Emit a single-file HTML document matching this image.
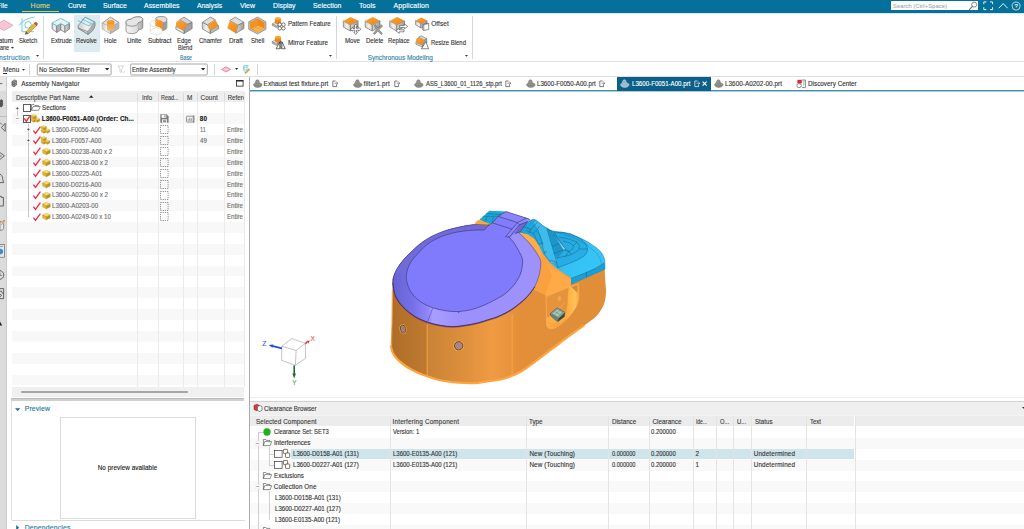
<!DOCTYPE html>
<html><head><meta charset="utf-8"><title>NX</title>
<style>
html,body{margin:0;padding:0;}
body{width:1024px;height:529px;overflow:hidden;background:#fff;position:relative;font-family:"Liberation Sans",sans-serif;}
#r{position:absolute;left:0;top:0;width:1024px;height:529px;overflow:hidden;}
#r div,#r span,#r svg{position:absolute;}
#r span{white-space:nowrap;-webkit-text-stroke:0.12px currentColor;}
#r svg{overflow:visible;}
</style></head><body><div id="r">
<div style="left:0px;top:0px;width:1024px;height:12.6px;background:#05719b;"></div>
<span style="left:-2.60px;top:1.19px;font-size:7px;line-height:9.00px;color:#ffffff;letter-spacing:0.000px;transform:scaleX(0.9309);transform-origin:0 0;">File</span>
<span style="left:30.60px;top:1.19px;font-size:7px;line-height:9.00px;color:#e9cf62;letter-spacing:0.242px;">Home</span>
<div style="left:21.9px;top:10.7px;width:36.9px;height:1.1px;background:#e6c84e;"></div>
<span style="left:67.50px;top:1.19px;font-size:7px;line-height:9.00px;color:#ffffff;letter-spacing:0.000px;transform:scaleX(0.9586);transform-origin:0 0;">Curve</span>
<span style="left:102.75px;top:1.19px;font-size:7px;line-height:9.00px;color:#ffffff;letter-spacing:0.000px;transform:scaleX(0.9845);transform-origin:0 0;">Surface</span>
<span style="left:144.25px;top:1.19px;font-size:7px;line-height:9.00px;color:#ffffff;letter-spacing:0.000px;transform:scaleX(0.9919);transform-origin:0 0;">Assemblies</span>
<span style="left:197.25px;top:1.19px;font-size:7px;line-height:9.00px;color:#ffffff;letter-spacing:0.000px;transform:scaleX(0.9687);transform-origin:0 0;">Analysis</span>
<span style="left:239.75px;top:1.19px;font-size:7px;line-height:9.00px;color:#ffffff;letter-spacing:0.000px;transform:scaleX(0.9969);transform-origin:0 0;">View</span>
<span style="left:272.50px;top:1.19px;font-size:7px;line-height:9.00px;color:#ffffff;letter-spacing:0.000px;transform:scaleX(0.9803);transform-origin:0 0;">Display</span>
<span style="left:312.90px;top:1.19px;font-size:7px;line-height:9.00px;color:#ffffff;letter-spacing:0.000px;transform:scaleX(0.9845);transform-origin:0 0;">Selection</span>
<span style="left:359.00px;top:1.19px;font-size:7px;line-height:9.00px;color:#ffffff;letter-spacing:0.065px;">Tools</span>
<span style="left:393.50px;top:1.19px;font-size:7px;line-height:9.00px;color:#ffffff;letter-spacing:0.125px;">Application</span>
<div style="left:891.2px;top:0.8px;width:87px;height:9.7px;background:#fff;border-radius:0.5px;"></div>
<span style="left:893.00px;top:2.11px;font-size:5.8px;line-height:8.00px;color:#a9adb0;letter-spacing:0.066px;">Search (Ctrl+Space)</span>
<svg style="left:968px;top:1px;" width="10" height="10" viewBox="0 0 10 10"><circle cx="6.2" cy="3.6" r="2.5" fill="none" stroke="#777" stroke-width="0.9"/><path d="M4.4 5.4 L1.6 8.4" stroke="#777" stroke-width="1.3" stroke-linecap="round"/></svg>
<svg style="left:983px;top:1px;" width="12" height="10" viewBox="0 0 12 10"><path d="M0.8 3.2V0.9H3.4M7 0.9H9.6V3.2M9.6 6.2V8.6H7M3.4 8.6H0.8V6.2" fill="none" stroke="#fff" stroke-width="0.9"/></svg>
<svg style="left:997.5px;top:1px;" width="11" height="10" viewBox="0 0 11 10"><path d="M0.8 7.2L5.2 2.6L9.6 7.2" fill="none" stroke="#fff" stroke-width="0.9"/></svg>
<svg style="left:1011px;top:0.5px;" width="11" height="11" viewBox="0 0 11 11"><circle cx="5.1" cy="5.1" r="4" fill="none" stroke="#fff" stroke-width="0.7"/></svg>
<span style="left:1014.40px;top:1.97px;font-size:6.2px;line-height:8.00px;color:#ffffff;letter-spacing:0.000px;">?</span>
<div style="left:0px;top:12.6px;width:1024px;height:49px;background:#fff;"></div>
<div style="left:0px;top:61.4px;width:1024px;height:0.9px;background:#e0e0e0;"></div>
<div style="left:0px;top:12.6px;width:1024px;height:1px;background:#d9e8ef;"></div>
<div style="left:74px;top:15.2px;width:26px;height:37px;background:#dcebf0;"></div>
<div style="left:43.3px;top:15.8px;width:0.8px;height:43px;background:#d6d6d6;"></div>
<div style="left:336px;top:15.8px;width:0.8px;height:43px;background:#d6d6d6;"></div>
<div style="left:471.6px;top:15.8px;width:0.8px;height:43px;background:#d6d6d6;"></div>
<span style="left:50.75px;top:36.90px;font-size:6.4px;line-height:8.00px;color:#333;letter-spacing:0.000px;transform:scaleX(0.9521);transform-origin:0 0;">Extrude</span>
<span style="left:76.25px;top:36.90px;font-size:6.4px;line-height:8.00px;color:#333;letter-spacing:0.000px;transform:scaleX(0.8974);transform-origin:0 0;">Revolve</span>
<span style="left:104.25px;top:36.90px;font-size:6.4px;line-height:8.00px;color:#333;letter-spacing:0.000px;transform:scaleX(0.9686);transform-origin:0 0;">Hole</span>
<span style="left:127.00px;top:36.90px;font-size:6.4px;line-height:8.00px;color:#333;letter-spacing:0.000px;transform:scaleX(0.9705);transform-origin:0 0;">Unite</span>
<span style="left:147.50px;top:36.90px;font-size:6.4px;line-height:8.00px;color:#333;letter-spacing:0.000px;transform:scaleX(0.9859);transform-origin:0 0;">Subtract</span>
<span style="left:176.75px;top:36.90px;font-size:6.4px;line-height:8.00px;color:#333;letter-spacing:0.000px;transform:scaleX(0.9366);transform-origin:0 0;">Edge</span>
<span style="left:177.50px;top:43.90px;font-size:6.4px;line-height:8.00px;color:#333;letter-spacing:0.000px;transform:scaleX(0.8705);transform-origin:0 0;">Blend</span>
<span style="left:199.25px;top:36.90px;font-size:6.4px;line-height:8.00px;color:#333;letter-spacing:0.000px;transform:scaleX(0.9372);transform-origin:0 0;">Chamfer</span>
<span style="left:228.75px;top:36.90px;font-size:6.4px;line-height:8.00px;color:#333;letter-spacing:0.000px;transform:scaleX(0.9914);transform-origin:0 0;">Draft</span>
<span style="left:250.60px;top:36.90px;font-size:6.4px;line-height:8.00px;color:#333;letter-spacing:0.000px;transform:scaleX(0.9415);transform-origin:0 0;">Shell</span>
<span style="left:18.75px;top:36.90px;font-size:6.4px;line-height:8.00px;color:#333;letter-spacing:0.000px;transform:scaleX(0.9327);transform-origin:0 0;">Sketch</span>
<span style="left:-6.00px;top:36.90px;font-size:6.4px;line-height:8.00px;color:#333;letter-spacing:0.037px;">Datum</span>
<span style="left:-4.60px;top:43.90px;font-size:6.4px;line-height:8.00px;color:#333;letter-spacing:0.000px;transform:scaleX(0.8675);transform-origin:0 0;">Plane</span>
<svg style="left:10.6px;top:46.5px;" width="4" height="3" viewBox="0 0 4 3"><path d="M0 0H3L1.5 1.8Z" fill="#333"/></svg>
<span style="left:-9.50px;top:53.90px;font-size:6.4px;line-height:8.00px;color:#2b80a8;letter-spacing:0.279px;">Construction</span>
<svg style="left:36px;top:55px;" width="4" height="3" viewBox="0 0 4 3"><path d="M0 0H3L1.5 1.8Z" fill="#333"/></svg>
<span style="left:180.00px;top:53.90px;font-size:6.4px;line-height:8.00px;color:#2b80a8;letter-spacing:0.000px;transform:scaleX(0.8226);transform-origin:0 0;">Base</span>
<svg style="left:329.3px;top:55px;" width="4" height="3" viewBox="0 0 4 3"><path d="M0 0H3L1.5 1.8Z" fill="#333"/></svg>
<span style="left:287.90px;top:19.90px;font-size:6.4px;line-height:8.00px;color:#333;letter-spacing:0.000px;transform:scaleX(0.9602);transform-origin:0 0;">Pattern Feature</span>
<span style="left:287.90px;top:38.90px;font-size:6.4px;line-height:8.00px;color:#333;letter-spacing:0.000px;transform:scaleX(0.9891);transform-origin:0 0;">Mirror Feature</span>
<span style="left:344.75px;top:36.90px;font-size:6.4px;line-height:8.00px;color:#333;letter-spacing:0.000px;transform:scaleX(0.9584);transform-origin:0 0;">Move</span>
<span style="left:365.60px;top:36.90px;font-size:6.4px;line-height:8.00px;color:#333;letter-spacing:0.000px;transform:scaleX(0.9459);transform-origin:0 0;">Delete</span>
<span style="left:388.10px;top:36.90px;font-size:6.4px;line-height:8.00px;color:#333;letter-spacing:0.000px;transform:scaleX(0.9220);transform-origin:0 0;">Replace</span>
<span style="left:431.25px;top:19.90px;font-size:6.4px;line-height:8.00px;color:#333;letter-spacing:0.109px;">Offset</span>
<span style="left:431.25px;top:38.90px;font-size:6.4px;line-height:8.00px;color:#333;letter-spacing:0.000px;transform:scaleX(0.9281);transform-origin:0 0;">Resize Blend</span>
<span style="left:367.75px;top:53.90px;font-size:6.4px;line-height:8.00px;color:#2b80a8;letter-spacing:0.007px;">Synchronous Modeling</span>
<svg style="left:464.6px;top:55px;" width="4" height="3" viewBox="0 0 4 3"><path d="M0 0H3L1.5 1.8Z" fill="#333"/></svg>
<div style="left:0px;top:62.3px;width:1024px;height:14px;background:#fff;"></div>
<div style="left:0px;top:76px;width:1024px;height:0.9px;background:#dedede;"></div>
<span style="left:3.00px;top:65.90px;font-size:6.4px;line-height:8.00px;color:#333;letter-spacing:0.097px;">Menu</span>
<div style="left:3px;top:72.6px;width:4.2px;height:0.6px;background:#333;"></div>
<svg style="left:22px;top:68.5px;" width="4" height="3" viewBox="0 0 4 3"><path d="M0 0H3L1.5 1.8Z" fill="#333"/></svg>
<div style="left:29.3px;top:64px;width:0.7px;height:11px;background:#d6d6d6;"></div>
<svg style="left:36px;top:63px;" width="77" height="13" viewBox="36 63 77 13"><rect x="37.3" y="64" width="73.8" height="11" rx="0.8" fill="#fff" stroke="#9c9c9c" stroke-width="0.9"/></svg>
<span style="left:38.70px;top:65.90px;font-size:6.4px;line-height:8.00px;color:#333;letter-spacing:0.000px;transform:scaleX(0.9715);transform-origin:0 0;">No Selection Filter</span>
<svg style="left:104.5px;top:68.3px;" width="5" height="3" viewBox="0 0 5 3"><path d="M0 0H4.2L2.1 2.4Z" fill="#222"/></svg>
<svg style="left:116.5px;top:65px;" width="10" height="10" viewBox="0 0 10 10"><path d="M1 1H6.5L4.6 4V7.2H3V4Z" fill="none" stroke="#c4c4c4" stroke-width="0.7"/><path d="M6 7.5Q8 7.8 7.6 6" fill="none" stroke="#c4c4c4" stroke-width="0.6"/></svg>
<svg style="left:129px;top:63px;" width="80" height="13" viewBox="129 63 80 13"><rect x="130.7" y="64" width="76.6" height="11" rx="0.8" fill="#fff" stroke="#9c9c9c" stroke-width="0.9"/></svg>
<span style="left:131.60px;top:65.90px;font-size:6.4px;line-height:8.00px;color:#333;letter-spacing:0.000px;transform:scaleX(0.9524);transform-origin:0 0;">Entire Assembly</span>
<svg style="left:201.3px;top:68.3px;" width="5" height="3" viewBox="0 0 5 3"><path d="M0 0H4.2L2.1 2.4Z" fill="#222"/></svg>
<div style="left:214px;top:64px;width:0.7px;height:11px;background:#d6d6d6;"></div>
<svg style="left:220.5px;top:66px;" width="11" height="7" viewBox="0 0 11 7"><path d="M0.6 3.4L5 0.8L9.6 3.4L5 6Z" fill="#f8c8d6" stroke="#e0608a" stroke-width="0.7"/></svg>
<svg style="left:234.8px;top:68.3px;" width="4" height="3" viewBox="0 0 4 3"><path d="M0 0H3.2L1.6 1.9Z" fill="#333"/></svg>
<div style="left:257.3px;top:64px;width:0.7px;height:11px;background:#d6d6d6;"></div>
<div style="left:0px;top:76.9px;width:6.9px;height:452.1px;background:#dbdbdb;"></div>
<div style="left:6.2px;top:76.9px;width:0.8px;height:452.1px;background:#cdcdcd;"></div>
<div style="left:7px;top:76.9px;width:4.5px;height:452.1px;background:#fff;"></div>
<div style="left:0px;top:76.9px;width:6.2px;height:14.5px;background:#e8e8e8;"></div>
<div style="left:0px;top:116px;width:7.2px;height:0.6px;background:#bdbdbd;"></div>
<div style="left:11.5px;top:76.9px;width:233.3px;height:452.1px;background:#fff;"></div>
<div style="left:244.6px;top:76.9px;width:0.7px;height:452.1px;background:#d8d8d8;"></div>
<div style="left:245.3px;top:76.9px;width:4px;height:452.1px;background:#fff;"></div>
<div style="left:249.3px;top:76.9px;width:0.9px;height:452.1px;background:#ababab;"></div>
<span style="left:21.20px;top:79.90px;font-size:6.4px;line-height:8.00px;color:#333;letter-spacing:0.088px;">Assembly Navigator</span>
<svg style="left:236px;top:80.3px;" width="8" height="7" viewBox="0 0 8 7"><rect x="0.5" y="0.5" width="6.6" height="5.6" fill="#fff" stroke="#222" stroke-width="0.8"/><rect x="0.5" y="0.3" width="6.6" height="1.2" fill="#222"/></svg>
<div style="left:12.1px;top:91.4px;width:231.8px;height:10.8px;background:#eeeeee;"></div>
<span style="left:15.70px;top:93.90px;font-size:6.4px;line-height:8.00px;color:#444;letter-spacing:0.000px;transform:scaleX(0.9934);transform-origin:0 0;">Descriptive Part Name</span>
<svg style="left:88.8px;top:95.2px;" width="5" height="4" viewBox="0 0 5 4"><path d="M0 2.8L2.2 0.2L4.4 2.8Z" fill="#222"/></svg>
<span style="left:141.50px;top:93.90px;font-size:6.4px;line-height:8.00px;color:#444;letter-spacing:0.000px;transform:scaleX(0.9461);transform-origin:0 0;">Info</span>
<span style="left:161.00px;top:93.90px;font-size:6.4px;line-height:8.00px;color:#444;letter-spacing:0.000px;transform:scaleX(0.8481);transform-origin:0 0;">Read...</span>
<span style="left:187.00px;top:93.90px;font-size:6.4px;line-height:8.00px;color:#444;letter-spacing:0.268px;">M</span>
<span style="left:200.50px;top:93.90px;font-size:6.4px;line-height:8.00px;color:#444;letter-spacing:0.055px;">Count</span>
<div style="left:227.5px;top:91.6px;width:16.4px;height:10.6px;overflow:hidden;"><span style="left:0;top:2.1px;font-size:6.4px;line-height:8.3px;color:#444;letter-spacing:-0.05px;">Reference Set</span></div>
<div style="left:12.1px;top:102.1px;width:231.8px;height:10.9px;background:#fff;"></div>
<div style="left:12.1px;top:113.0px;width:231.8px;height:10.9px;background:#f8f8f8;"></div>
<div style="left:12.1px;top:123.89999999999999px;width:231.8px;height:10.9px;background:#fff;"></div>
<div style="left:12.1px;top:134.8px;width:231.8px;height:10.9px;background:#f8f8f8;"></div>
<div style="left:12.1px;top:145.7px;width:231.8px;height:10.9px;background:#fff;"></div>
<div style="left:12.1px;top:156.6px;width:231.8px;height:10.9px;background:#f8f8f8;"></div>
<div style="left:12.1px;top:167.5px;width:231.8px;height:10.9px;background:#fff;"></div>
<div style="left:12.1px;top:178.39999999999998px;width:231.8px;height:10.9px;background:#f8f8f8;"></div>
<div style="left:12.1px;top:189.3px;width:231.8px;height:10.9px;background:#fff;"></div>
<div style="left:12.1px;top:200.2px;width:231.8px;height:10.9px;background:#f8f8f8;"></div>
<div style="left:12.1px;top:211.1px;width:231.8px;height:10.9px;background:#fff;"></div>
<div style="left:12.1px;top:222.0px;width:231.8px;height:10.9px;background:#f8f8f8;"></div>
<div style="left:12.1px;top:232.9px;width:231.8px;height:10.9px;background:#fff;"></div>
<div style="left:12.1px;top:243.8px;width:231.8px;height:10.9px;background:#f8f8f8;"></div>
<div style="left:12.1px;top:254.7px;width:231.8px;height:10.9px;background:#fff;"></div>
<div style="left:12.1px;top:265.6px;width:231.8px;height:10.9px;background:#f8f8f8;"></div>
<div style="left:12.1px;top:276.5px;width:231.8px;height:10.9px;background:#fff;"></div>
<div style="left:12.1px;top:287.4px;width:231.8px;height:10.9px;background:#f8f8f8;"></div>
<div style="left:12.1px;top:298.3px;width:231.8px;height:10.9px;background:#fff;"></div>
<div style="left:12.1px;top:309.2px;width:231.8px;height:10.9px;background:#f8f8f8;"></div>
<div style="left:12.1px;top:320.1px;width:231.8px;height:10.9px;background:#fff;"></div>
<div style="left:12.1px;top:331.0px;width:231.8px;height:10.9px;background:#f8f8f8;"></div>
<div style="left:12.1px;top:341.9px;width:231.8px;height:10.9px;background:#fff;"></div>
<div style="left:12.1px;top:352.8px;width:231.8px;height:10.9px;background:#f8f8f8;"></div>
<div style="left:12.1px;top:363.70000000000005px;width:231.8px;height:10.9px;background:#fff;"></div>
<div style="left:12.1px;top:374.6px;width:231.8px;height:10.9px;background:#f8f8f8;"></div>
<div style="left:12.1px;top:385.5px;width:231.8px;height:1.8000000000000114px;background:#fff;"></div>
<div style="left:137.2px;top:91.6px;width:0.7px;height:295.7px;background:#ebebeb;"></div>
<div style="left:157.5px;top:91.6px;width:0.7px;height:295.7px;background:#ebebeb;"></div>
<div style="left:183.4px;top:91.6px;width:0.7px;height:295.7px;background:#ebebeb;"></div>
<div style="left:196.5px;top:91.6px;width:0.7px;height:295.7px;background:#ebebeb;"></div>
<div style="left:224.4px;top:91.6px;width:0.7px;height:295.7px;background:#ebebeb;"></div>
<div style="left:137.2px;top:93px;width:0.7px;height:8px;background:#dadada;"></div>
<div style="left:157.5px;top:93px;width:0.7px;height:8px;background:#dadada;"></div>
<div style="left:183.4px;top:93px;width:0.7px;height:8px;background:#dadada;"></div>
<div style="left:196.5px;top:93px;width:0.7px;height:8px;background:#dadada;"></div>
<div style="left:224.4px;top:93px;width:0.7px;height:8px;background:#dadada;"></div>
<div style="left:243.6px;top:91.6px;width:0.6px;height:295.7px;background:#e9e9e9;"></div>
<div style="left:12.1px;top:387.3px;width:231.8px;height:9.5px;background:#f0f0f0;"></div>
<div style="left:21.2px;top:391.2px;width:167.1px;height:1.7px;background:#a6a6a6;border-radius:0.8px;"></div>
<div style="left:11.3px;top:398px;width:233px;height:3.2px;background:#cfcfcf;"></div>
<div style="left:11.3px;top:398px;width:233px;height:0.8px;background:#bcbcbc;"></div>
<div style="left:17.3px;top:110.4px;width:0.5px;height:6px;background:#c4c4c4;"></div>
<div style="left:27.9px;top:124px;width:0.5px;height:93px;background:#c4c4c4;"></div>
<svg style="left:15px;top:105.49999999999999px;" width="5" height="5" viewBox="0 0 5 5"><rect x="0.2" y="0.2" width="4.4" height="4.4" rx="0.8" fill="#fff" stroke="#e2e2e2" stroke-width="0.4"/><path d="M1.2 2.4H3.6M2.4 1.2V3.6" stroke="#333" stroke-width="0.7"/></svg>
<div style="left:23.1px;top:103.99999999999999px;width:7.8px;height:7.8px;background:#fff;box-sizing:border-box;border:0.9px solid #5c5c5c;"></div>
<svg style="left:31.3px;top:104.39999999999999px;" width="10" height="7" viewBox="0 0 10 7"><path d="M0.5 6.3V0.6H3L3.8 1.5H7.4V2.6M0.5 6.3L2 2.6H9.2L7.6 6.3Z" fill="#fff" stroke="#444" stroke-width="0.6"/></svg>
<span style="left:41.75px;top:103.90px;font-size:6.4px;line-height:8.00px;color:#333;letter-spacing:0.000px;transform:scaleX(0.9757);transform-origin:0 0;">Sections</span>
<svg style="left:15px;top:116.39999999999999px;" width="5" height="5" viewBox="0 0 5 5"><rect x="0.2" y="0.2" width="4.4" height="4.4" rx="0.8" fill="#fff" stroke="#e2e2e2" stroke-width="0.4"/><path d="M1.1 2.4H3.7" stroke="#777" stroke-width="0.7"/></svg>
<div style="left:23.1px;top:114.89999999999999px;width:7.8px;height:7.8px;background:#fff;box-sizing:border-box;border:0.9px solid #5c5c5c;"></div>
<svg style="left:23.1px;top:114.89999999999999px;" width="8" height="8" viewBox="0 0 8 8"><path d="M1.3 3.4L3.3 6.2L6.7 1.4" fill="none" stroke="#ee2a48" stroke-width="1.4"/></svg>
<span style="left:41.75px;top:114.90px;font-size:6.4px;line-height:8.00px;color:#1a1a1a;letter-spacing:0.030px;font-weight:bold;">L3600-F0051-A00 (Order: Ch...</span>
<span style="left:199.70px;top:114.90px;font-size:6.4px;line-height:8.00px;color:#1a1a1a;letter-spacing:0.181px;font-weight:bold;">80</span>
<svg style="left:25.6px;top:127.29999999999998px;" width="5" height="5" viewBox="0 0 5 5"><rect x="0.2" y="0.2" width="4.4" height="4.4" rx="0.8" fill="#fff" stroke="#e2e2e2" stroke-width="0.4"/><path d="M1.2 2.4H3.6M2.4 1.2V3.6" stroke="#333" stroke-width="0.7"/></svg>
<svg style="left:41px;top:125.29999999999998px;" width="9" height="9" viewBox="0 0 9 9"><path d="M0.20 4.84 L2.80 6.08 V8.20 L0.20 6.96Z" fill="#e6b82c"/><path d="M2.80 6.08 L5.40 4.84 V6.96 L2.80 8.20Z" fill="#c4921a"/><path d="M2.80 3.60 L5.40 4.84 L2.80 6.08 L0.20 4.84Z" fill="#f9e066"/><path d="M2.80 3.60 L5.40 4.84 L2.80 6.08 L0.20 4.84Z M0.20 4.84 L2.80 6.08 V8.20 L0.20 6.96Z M2.80 6.08 L5.40 4.84 V6.96 L2.80 8.20Z" fill="none" stroke="#a87c10" stroke-width="0.25"/><path d="M0.20 1.64 L2.80 2.88 V5.00 L0.20 3.76Z" fill="#e6b82c"/><path d="M2.80 2.88 L5.40 1.64 V3.76 L2.80 5.00Z" fill="#c4921a"/><path d="M2.80 0.40 L5.40 1.64 L2.80 2.88 L0.20 1.64Z" fill="#f9e066"/><path d="M2.80 0.40 L5.40 1.64 L2.80 2.88 L0.20 1.64Z M0.20 1.64 L2.80 2.88 V5.00 L0.20 3.76Z M2.80 2.88 L5.40 1.64 V3.76 L2.80 5.00Z" fill="none" stroke="#a87c10" stroke-width="0.25"/><path d="M4.00 4.99 L6.40 6.18 V8.20 L4.00 7.01Z" fill="#e6b82c"/><path d="M6.40 6.18 L8.80 4.99 V7.01 L6.40 8.20Z" fill="#c4921a"/><path d="M6.40 3.80 L8.80 4.99 L6.40 6.18 L4.00 4.99Z" fill="#f9e066"/><path d="M6.40 3.80 L8.80 4.99 L6.40 6.18 L4.00 4.99Z M4.00 4.99 L6.40 6.18 V8.20 L4.00 7.01Z M6.40 6.18 L8.80 4.99 V7.01 L6.40 8.20Z" fill="none" stroke="#a87c10" stroke-width="0.25"/></svg>
<svg style="left:33.2px;top:125.49999999999999px;" width="8" height="8" viewBox="0 0 8 8"><path d="M0.4 4.6L2.5 7.4L7.4 0.6" fill="none" stroke="#ee2a48" stroke-width="1.3"/></svg>
<span style="left:52.00px;top:125.90px;font-size:6.4px;line-height:8.00px;color:#6e6e6e;letter-spacing:0.000px;transform:scaleX(0.9574);transform-origin:0 0;">L3600-F0056-A00</span>
<svg style="left:160.1px;top:125.19999999999999px;" width="9" height="9" viewBox="0 0 9 9"><rect x="0.5" y="0.5" width="7.6" height="8" fill="none" stroke="#5e5e5e" stroke-width="0.65" stroke-dasharray="1.3 0.9"/></svg>
<span style="left:227.00px;top:125.90px;font-size:6.4px;line-height:8.00px;color:#6e6e6e;letter-spacing:0.000px;transform:scaleX(0.9570);transform-origin:0 0;">Entire</span>
<svg style="left:25.6px;top:138.2px;" width="5" height="5" viewBox="0 0 5 5"><rect x="0.2" y="0.2" width="4.4" height="4.4" rx="0.8" fill="#fff" stroke="#e2e2e2" stroke-width="0.4"/><path d="M1.2 2.4H3.6M2.4 1.2V3.6" stroke="#333" stroke-width="0.7"/></svg>
<svg style="left:41px;top:136.2px;" width="9" height="9" viewBox="0 0 9 9"><path d="M0.20 4.84 L2.80 6.08 V8.20 L0.20 6.96Z" fill="#e6b82c"/><path d="M2.80 6.08 L5.40 4.84 V6.96 L2.80 8.20Z" fill="#c4921a"/><path d="M2.80 3.60 L5.40 4.84 L2.80 6.08 L0.20 4.84Z" fill="#f9e066"/><path d="M2.80 3.60 L5.40 4.84 L2.80 6.08 L0.20 4.84Z M0.20 4.84 L2.80 6.08 V8.20 L0.20 6.96Z M2.80 6.08 L5.40 4.84 V6.96 L2.80 8.20Z" fill="none" stroke="#a87c10" stroke-width="0.25"/><path d="M0.20 1.64 L2.80 2.88 V5.00 L0.20 3.76Z" fill="#e6b82c"/><path d="M2.80 2.88 L5.40 1.64 V3.76 L2.80 5.00Z" fill="#c4921a"/><path d="M2.80 0.40 L5.40 1.64 L2.80 2.88 L0.20 1.64Z" fill="#f9e066"/><path d="M2.80 0.40 L5.40 1.64 L2.80 2.88 L0.20 1.64Z M0.20 1.64 L2.80 2.88 V5.00 L0.20 3.76Z M2.80 2.88 L5.40 1.64 V3.76 L2.80 5.00Z" fill="none" stroke="#a87c10" stroke-width="0.25"/><path d="M4.00 4.99 L6.40 6.18 V8.20 L4.00 7.01Z" fill="#e6b82c"/><path d="M6.40 6.18 L8.80 4.99 V7.01 L6.40 8.20Z" fill="#c4921a"/><path d="M6.40 3.80 L8.80 4.99 L6.40 6.18 L4.00 4.99Z" fill="#f9e066"/><path d="M6.40 3.80 L8.80 4.99 L6.40 6.18 L4.00 4.99Z M4.00 4.99 L6.40 6.18 V8.20 L4.00 7.01Z M6.40 6.18 L8.80 4.99 V7.01 L6.40 8.20Z" fill="none" stroke="#a87c10" stroke-width="0.25"/></svg>
<svg style="left:33.2px;top:136.4px;" width="8" height="8" viewBox="0 0 8 8"><path d="M0.4 4.6L2.5 7.4L7.4 0.6" fill="none" stroke="#ee2a48" stroke-width="1.3"/></svg>
<span style="left:52.00px;top:136.90px;font-size:6.4px;line-height:8.00px;color:#6e6e6e;letter-spacing:0.000px;transform:scaleX(0.9574);transform-origin:0 0;">L3600-F0057-A00</span>
<svg style="left:160.1px;top:136.1px;" width="9" height="9" viewBox="0 0 9 9"><rect x="0.5" y="0.5" width="7.6" height="8" fill="none" stroke="#5e5e5e" stroke-width="0.65" stroke-dasharray="1.3 0.9"/></svg>
<span style="left:227.00px;top:136.90px;font-size:6.4px;line-height:8.00px;color:#6e6e6e;letter-spacing:0.000px;transform:scaleX(0.9570);transform-origin:0 0;">Entire</span>
<svg style="left:41.8px;top:146.89999999999998px;" width="9" height="9" viewBox="0 0 9 9"><path d="M0.60 2.98 L4.40 4.76 V7.80 L0.60 6.02Z" fill="#e6b82c"/><path d="M4.40 4.76 L8.20 2.98 V6.02 L4.40 7.80Z" fill="#c4921a"/><path d="M4.40 1.20 L8.20 2.98 L4.40 4.76 L0.60 2.98Z" fill="#f9e066"/><path d="M4.40 1.20 L8.20 2.98 L4.40 4.76 L0.60 2.98Z M0.60 2.98 L4.40 4.76 V7.80 L0.60 6.02Z M4.40 4.76 L8.20 2.98 V6.02 L4.40 7.80Z" fill="none" stroke="#a87c10" stroke-width="0.3"/></svg>
<svg style="left:33.2px;top:147.29999999999998px;" width="8" height="8" viewBox="0 0 8 8"><path d="M0.4 4.6L2.5 7.4L7.4 0.6" fill="none" stroke="#ee2a48" stroke-width="1.3"/></svg>
<span style="left:52.00px;top:147.90px;font-size:6.4px;line-height:8.00px;color:#6e6e6e;letter-spacing:0.000px;transform:scaleX(0.9629);transform-origin:0 0;">L3600-D0238-A00 x 2</span>
<svg style="left:160.1px;top:146.99999999999997px;" width="9" height="9" viewBox="0 0 9 9"><rect x="0.5" y="0.5" width="7.6" height="8" fill="none" stroke="#5e5e5e" stroke-width="0.65" stroke-dasharray="1.3 0.9"/></svg>
<span style="left:227.00px;top:147.90px;font-size:6.4px;line-height:8.00px;color:#6e6e6e;letter-spacing:0.000px;transform:scaleX(0.9570);transform-origin:0 0;">Entire</span>
<svg style="left:41.8px;top:157.79999999999998px;" width="9" height="9" viewBox="0 0 9 9"><path d="M0.60 2.98 L4.40 4.76 V7.80 L0.60 6.02Z" fill="#e6b82c"/><path d="M4.40 4.76 L8.20 2.98 V6.02 L4.40 7.80Z" fill="#c4921a"/><path d="M4.40 1.20 L8.20 2.98 L4.40 4.76 L0.60 2.98Z" fill="#f9e066"/><path d="M4.40 1.20 L8.20 2.98 L4.40 4.76 L0.60 2.98Z M0.60 2.98 L4.40 4.76 V7.80 L0.60 6.02Z M4.40 4.76 L8.20 2.98 V6.02 L4.40 7.80Z" fill="none" stroke="#a87c10" stroke-width="0.3"/></svg>
<svg style="left:33.2px;top:158.2px;" width="8" height="8" viewBox="0 0 8 8"><path d="M0.4 4.6L2.5 7.4L7.4 0.6" fill="none" stroke="#ee2a48" stroke-width="1.3"/></svg>
<span style="left:52.00px;top:158.90px;font-size:6.4px;line-height:8.00px;color:#6e6e6e;letter-spacing:0.000px;transform:scaleX(0.9655);transform-origin:0 0;">L3600-A0218-00 x 2</span>
<svg style="left:160.1px;top:157.89999999999998px;" width="9" height="9" viewBox="0 0 9 9"><rect x="0.5" y="0.5" width="7.6" height="8" fill="none" stroke="#5e5e5e" stroke-width="0.65" stroke-dasharray="1.3 0.9"/></svg>
<span style="left:227.00px;top:158.90px;font-size:6.4px;line-height:8.00px;color:#6e6e6e;letter-spacing:0.000px;transform:scaleX(0.9570);transform-origin:0 0;">Entire</span>
<svg style="left:41.8px;top:168.7px;" width="9" height="9" viewBox="0 0 9 9"><path d="M0.60 2.98 L4.40 4.76 V7.80 L0.60 6.02Z" fill="#e6b82c"/><path d="M4.40 4.76 L8.20 2.98 V6.02 L4.40 7.80Z" fill="#c4921a"/><path d="M4.40 1.20 L8.20 2.98 L4.40 4.76 L0.60 2.98Z" fill="#f9e066"/><path d="M4.40 1.20 L8.20 2.98 L4.40 4.76 L0.60 2.98Z M0.60 2.98 L4.40 4.76 V7.80 L0.60 6.02Z M4.40 4.76 L8.20 2.98 V6.02 L4.40 7.80Z" fill="none" stroke="#a87c10" stroke-width="0.3"/></svg>
<svg style="left:33.2px;top:169.1px;" width="8" height="8" viewBox="0 0 8 8"><path d="M0.4 4.6L2.5 7.4L7.4 0.6" fill="none" stroke="#ee2a48" stroke-width="1.3"/></svg>
<span style="left:52.00px;top:169.90px;font-size:6.4px;line-height:8.00px;color:#6e6e6e;letter-spacing:0.000px;transform:scaleX(0.9616);transform-origin:0 0;">L3600-D0225-A01</span>
<svg style="left:160.1px;top:168.79999999999998px;" width="9" height="9" viewBox="0 0 9 9"><rect x="0.5" y="0.5" width="7.6" height="8" fill="none" stroke="#5e5e5e" stroke-width="0.65" stroke-dasharray="1.3 0.9"/></svg>
<span style="left:227.00px;top:169.90px;font-size:6.4px;line-height:8.00px;color:#6e6e6e;letter-spacing:0.000px;transform:scaleX(0.9570);transform-origin:0 0;">Entire</span>
<svg style="left:41.8px;top:179.59999999999997px;" width="9" height="9" viewBox="0 0 9 9"><path d="M0.60 2.98 L4.40 4.76 V7.80 L0.60 6.02Z" fill="#e6b82c"/><path d="M4.40 4.76 L8.20 2.98 V6.02 L4.40 7.80Z" fill="#c4921a"/><path d="M4.40 1.20 L8.20 2.98 L4.40 4.76 L0.60 2.98Z" fill="#f9e066"/><path d="M4.40 1.20 L8.20 2.98 L4.40 4.76 L0.60 2.98Z M0.60 2.98 L4.40 4.76 V7.80 L0.60 6.02Z M4.40 4.76 L8.20 2.98 V6.02 L4.40 7.80Z" fill="none" stroke="#a87c10" stroke-width="0.3"/></svg>
<svg style="left:33.2px;top:179.99999999999997px;" width="8" height="8" viewBox="0 0 8 8"><path d="M0.4 4.6L2.5 7.4L7.4 0.6" fill="none" stroke="#ee2a48" stroke-width="1.3"/></svg>
<span style="left:52.00px;top:180.90px;font-size:6.4px;line-height:8.00px;color:#6e6e6e;letter-spacing:0.000px;transform:scaleX(0.9444);transform-origin:0 0;">L3600-D0216-A00</span>
<svg style="left:160.1px;top:179.69999999999996px;" width="9" height="9" viewBox="0 0 9 9"><rect x="0.5" y="0.5" width="7.6" height="8" fill="none" stroke="#5e5e5e" stroke-width="0.65" stroke-dasharray="1.3 0.9"/></svg>
<span style="left:227.00px;top:180.90px;font-size:6.4px;line-height:8.00px;color:#6e6e6e;letter-spacing:0.000px;transform:scaleX(0.9570);transform-origin:0 0;">Entire</span>
<svg style="left:41.8px;top:190.5px;" width="9" height="9" viewBox="0 0 9 9"><path d="M0.60 2.98 L4.40 4.76 V7.80 L0.60 6.02Z" fill="#e6b82c"/><path d="M4.40 4.76 L8.20 2.98 V6.02 L4.40 7.80Z" fill="#c4921a"/><path d="M4.40 1.20 L8.20 2.98 L4.40 4.76 L0.60 2.98Z" fill="#f9e066"/><path d="M4.40 1.20 L8.20 2.98 L4.40 4.76 L0.60 2.98Z M0.60 2.98 L4.40 4.76 V7.80 L0.60 6.02Z M4.40 4.76 L8.20 2.98 V6.02 L4.40 7.80Z" fill="none" stroke="#a87c10" stroke-width="0.3"/></svg>
<svg style="left:33.2px;top:190.9px;" width="8" height="8" viewBox="0 0 8 8"><path d="M0.4 4.6L2.5 7.4L7.4 0.6" fill="none" stroke="#ee2a48" stroke-width="1.3"/></svg>
<span style="left:52.00px;top:190.90px;font-size:6.4px;line-height:8.00px;color:#6e6e6e;letter-spacing:0.000px;transform:scaleX(0.9655);transform-origin:0 0;">L3600-A0250-00 x 2</span>
<svg style="left:160.1px;top:190.6px;" width="9" height="9" viewBox="0 0 9 9"><rect x="0.5" y="0.5" width="7.6" height="8" fill="none" stroke="#5e5e5e" stroke-width="0.65" stroke-dasharray="1.3 0.9"/></svg>
<span style="left:227.00px;top:190.90px;font-size:6.4px;line-height:8.00px;color:#6e6e6e;letter-spacing:0.000px;transform:scaleX(0.9570);transform-origin:0 0;">Entire</span>
<svg style="left:41.8px;top:201.39999999999998px;" width="9" height="9" viewBox="0 0 9 9"><path d="M0.60 2.98 L4.40 4.76 V7.80 L0.60 6.02Z" fill="#e6b82c"/><path d="M4.40 4.76 L8.20 2.98 V6.02 L4.40 7.80Z" fill="#c4921a"/><path d="M4.40 1.20 L8.20 2.98 L4.40 4.76 L0.60 2.98Z" fill="#f9e066"/><path d="M4.40 1.20 L8.20 2.98 L4.40 4.76 L0.60 2.98Z M0.60 2.98 L4.40 4.76 V7.80 L0.60 6.02Z M4.40 4.76 L8.20 2.98 V6.02 L4.40 7.80Z" fill="none" stroke="#a87c10" stroke-width="0.3"/></svg>
<svg style="left:33.2px;top:201.79999999999998px;" width="8" height="8" viewBox="0 0 8 8"><path d="M0.4 4.6L2.5 7.4L7.4 0.6" fill="none" stroke="#ee2a48" stroke-width="1.3"/></svg>
<span style="left:52.00px;top:201.90px;font-size:6.4px;line-height:8.00px;color:#6e6e6e;letter-spacing:0.000px;transform:scaleX(0.9688);transform-origin:0 0;">L3600-A0203-00</span>
<svg style="left:160.1px;top:201.49999999999997px;" width="9" height="9" viewBox="0 0 9 9"><rect x="0.5" y="0.5" width="7.6" height="8" fill="none" stroke="#5e5e5e" stroke-width="0.65" stroke-dasharray="1.3 0.9"/></svg>
<span style="left:227.00px;top:201.90px;font-size:6.4px;line-height:8.00px;color:#6e6e6e;letter-spacing:0.000px;transform:scaleX(0.9570);transform-origin:0 0;">Entire</span>
<svg style="left:41.8px;top:212.29999999999998px;" width="9" height="9" viewBox="0 0 9 9"><path d="M0.60 2.98 L4.40 4.76 V7.80 L0.60 6.02Z" fill="#e6b82c"/><path d="M4.40 4.76 L8.20 2.98 V6.02 L4.40 7.80Z" fill="#c4921a"/><path d="M4.40 1.20 L8.20 2.98 L4.40 4.76 L0.60 2.98Z" fill="#f9e066"/><path d="M4.40 1.20 L8.20 2.98 L4.40 4.76 L0.60 2.98Z M0.60 2.98 L4.40 4.76 V7.80 L0.60 6.02Z M4.40 4.76 L8.20 2.98 V6.02 L4.40 7.80Z" fill="none" stroke="#a87c10" stroke-width="0.3"/></svg>
<svg style="left:33.2px;top:212.7px;" width="8" height="8" viewBox="0 0 8 8"><path d="M0.4 4.6L2.5 7.4L7.4 0.6" fill="none" stroke="#ee2a48" stroke-width="1.3"/></svg>
<span style="left:52.00px;top:212.90px;font-size:6.4px;line-height:8.00px;color:#6e6e6e;letter-spacing:0.000px;transform:scaleX(0.9584);transform-origin:0 0;">L3600-A0249-00 x 10</span>
<svg style="left:160.1px;top:212.39999999999998px;" width="9" height="9" viewBox="0 0 9 9"><rect x="0.5" y="0.5" width="7.6" height="8" fill="none" stroke="#5e5e5e" stroke-width="0.65" stroke-dasharray="1.3 0.9"/></svg>
<span style="left:227.00px;top:212.90px;font-size:6.4px;line-height:8.00px;color:#6e6e6e;letter-spacing:0.000px;transform:scaleX(0.9570);transform-origin:0 0;">Entire</span>
<svg style="left:31.2px;top:114.39999999999999px;" width="9" height="9" viewBox="0 0 9 9"><path d="M0.20 4.84 L2.80 6.08 V8.20 L0.20 6.96Z" fill="#e6b82c"/><path d="M2.80 6.08 L5.40 4.84 V6.96 L2.80 8.20Z" fill="#c4921a"/><path d="M2.80 3.60 L5.40 4.84 L2.80 6.08 L0.20 4.84Z" fill="#f9e066"/><path d="M2.80 3.60 L5.40 4.84 L2.80 6.08 L0.20 4.84Z M0.20 4.84 L2.80 6.08 V8.20 L0.20 6.96Z M2.80 6.08 L5.40 4.84 V6.96 L2.80 8.20Z" fill="none" stroke="#a87c10" stroke-width="0.25"/><path d="M0.20 1.64 L2.80 2.88 V5.00 L0.20 3.76Z" fill="#e6b82c"/><path d="M2.80 2.88 L5.40 1.64 V3.76 L2.80 5.00Z" fill="#c4921a"/><path d="M2.80 0.40 L5.40 1.64 L2.80 2.88 L0.20 1.64Z" fill="#f9e066"/><path d="M2.80 0.40 L5.40 1.64 L2.80 2.88 L0.20 1.64Z M0.20 1.64 L2.80 2.88 V5.00 L0.20 3.76Z M2.80 2.88 L5.40 1.64 V3.76 L2.80 5.00Z" fill="none" stroke="#a87c10" stroke-width="0.25"/><path d="M4.00 4.99 L6.40 6.18 V8.20 L4.00 7.01Z" fill="#e6b82c"/><path d="M6.40 6.18 L8.80 4.99 V7.01 L6.40 8.20Z" fill="#c4921a"/><path d="M6.40 3.80 L8.80 4.99 L6.40 6.18 L4.00 4.99Z" fill="#f9e066"/><path d="M6.40 3.80 L8.80 4.99 L6.40 6.18 L4.00 4.99Z M4.00 4.99 L6.40 6.18 V8.20 L4.00 7.01Z M6.40 6.18 L8.80 4.99 V7.01 L6.40 8.20Z" fill="none" stroke="#a87c10" stroke-width="0.25"/></svg>
<span style="left:199.70px;top:125.90px;font-size:6.4px;line-height:8.00px;color:#6e6e6e;letter-spacing:0.000px;transform:scaleX(0.8579);transform-origin:0 0;">11</span>
<span style="left:199.70px;top:136.90px;font-size:6.4px;line-height:8.00px;color:#6e6e6e;letter-spacing:0.000px;transform:scaleX(0.9692);transform-origin:0 0;">49</span>
<svg style="left:160px;top:114.2px;" width="9" height="9" viewBox="0 0 9 9"><path d="M0.3 0.3H6.6L8.6 2.2V8.7H0.3Z" fill="#7d7d7d"/><rect x="1.6" y="0.8" width="4.6" height="3" fill="#fff"/><rect x="4.4" y="1.2" width="1.1" height="2" fill="#7d7d7d"/><rect x="2" y="5.4" width="5" height="3.3" fill="#fff"/><rect x="2.8" y="6.2" width="3.4" height="2" fill="#8d8d8d"/></svg>
<svg style="left:186px;top:114.6px;" width="10" height="9" viewBox="0 0 10 9"><rect x="0.4" y="1.2" width="6.8" height="5.8" rx="0.6" fill="#f4f4f4" stroke="#7a7a7a" stroke-width="0.8"/><path d="M2.2 5.8V4M3.8 5.8V2.8M5.4 5.8V3.4" stroke="#6a6a6a" stroke-width="0.7"/><path d="M7.6 1.2Q8.8 4 7.6 7M7.8 0.2V2M7.8 6.2V8" fill="none" stroke="#6c6c6c" stroke-width="0.8"/></svg>
<svg style="left:15px;top:407.9px;" width="6" height="4" viewBox="0 0 6 4"><path d="M0 0.2H5.3L2.65 3Z" fill="#176b93"/></svg>
<span style="left:24.70px;top:404.23px;font-size:6.9px;line-height:9.00px;color:#2377a0;letter-spacing:0.126px;">Preview</span>
<div style="left:60px;top:417.2px;width:135.8px;height:101.6px;background:#fff;box-sizing:border-box;border:0.7px solid #dcdcdc;"></div>
<div style="left:11.2px;top:401.2px;width:0.7px;height:118.6px;background:#e2e2e2;"></div>
<span style="left:97.75px;top:463.94px;font-size:6.3px;line-height:8.00px;color:#222;letter-spacing:0.069px;">No preview available</span>
<div style="left:11.5px;top:519.6px;width:233.3px;height:0.7px;background:#dcdcdc;"></div>
<svg style="left:16.4px;top:524.8px;" width="4" height="6" viewBox="0 0 4 6"><path d="M0.2 0V5.4L3.1 2.7Z" fill="#176b93"/></svg>
<span style="left:24.70px;top:523.23px;font-size:6.9px;line-height:9.00px;color:#2377a0;letter-spacing:0.144px;">Dependencies</span>
<div style="left:250.1px;top:76.9px;width:773.9px;height:14.2px;background:#fff;"></div>
<div style="left:250.1px;top:90px;width:773.9px;height:1px;background:#4a8eae;"></div>
<div style="left:250.1px;top:91px;width:773.9px;height:1px;background:#a9cbd9;"></div>
<svg style="left:252.8px;top:79px;" width="10" height="9" viewBox="0 0 10 9"><path d="M0.6 6.2Q0.4 4.6 2.2 4.2L3 1.4Q4.6 0.2 5.8 1.4L6.4 3.8Q9 4.2 9.2 6.2Q7.6 8.4 4.8 8.4Q1.6 8.4 0.6 6.2Z" fill="#949494" stroke="#6e6e6e" stroke-width="0.6"/><path d="M1.6 6Q4.8 7.8 8.4 5.8M3 4.4Q4.6 5.2 6.4 4.2" fill="none" stroke="#6e6e6e" stroke-width="0.5"/></svg>
<span style="left:263.60px;top:79.90px;font-size:6.4px;line-height:8.00px;color:#333;letter-spacing:0.053px;">Exhaust test fixture.prt</span>
<svg style="left:332.3px;top:80.2px;" width="7" height="8" viewBox="0 0 7 8"><path d="M3.6 1H0.8V6.6H4.6V4.6" fill="none" stroke="#444" stroke-width="0.7"/><path d="M2.6 3.2H5.6M4.4 1.8L5.8 3.2L4.4 4.6" fill="none" stroke="#444" stroke-width="0.6"/></svg>
<svg style="left:352.6px;top:79px;" width="10" height="9" viewBox="0 0 10 9"><path d="M0.6 6.2Q0.4 4.6 2.2 4.2L3 1.4Q4.6 0.2 5.8 1.4L6.4 3.8Q9 4.2 9.2 6.2Q7.6 8.4 4.8 8.4Q1.6 8.4 0.6 6.2Z" fill="#949494" stroke="#6e6e6e" stroke-width="0.6"/><path d="M1.6 6Q4.8 7.8 8.4 5.8M3 4.4Q4.6 5.2 6.4 4.2" fill="none" stroke="#6e6e6e" stroke-width="0.5"/></svg>
<span style="left:363.50px;top:79.90px;font-size:6.4px;line-height:8.00px;color:#333;letter-spacing:0.135px;">filter1.prt</span>
<svg style="left:393.6px;top:80.2px;" width="7" height="8" viewBox="0 0 7 8"><path d="M3.6 1H0.8V6.6H4.6V4.6" fill="none" stroke="#444" stroke-width="0.7"/><path d="M2.6 3.2H5.6M4.4 1.8L5.8 3.2L4.4 4.6" fill="none" stroke="#444" stroke-width="0.6"/></svg>
<svg style="left:413.6px;top:79px;" width="10" height="9" viewBox="0 0 10 9"><path d="M0.6 6.2Q0.4 4.6 2.2 4.2L3 1.4Q4.6 0.2 5.8 1.4L6.4 3.8Q9 4.2 9.2 6.2Q7.6 8.4 4.8 8.4Q1.6 8.4 0.6 6.2Z" fill="#949494" stroke="#6e6e6e" stroke-width="0.6"/><path d="M1.6 6Q4.8 7.8 8.4 5.8M3 4.4Q4.6 5.2 6.4 4.2" fill="none" stroke="#6e6e6e" stroke-width="0.5"/></svg>
<span style="left:425.50px;top:79.90px;font-size:6.4px;line-height:8.00px;color:#333;letter-spacing:0.000px;transform:scaleX(0.9101);transform-origin:0 0;">ASS_L3600_01_1126_stp.prt</span>
<svg style="left:505.3px;top:80.2px;" width="7" height="8" viewBox="0 0 7 8"><path d="M3.6 1H0.8V6.6H4.6V4.6" fill="none" stroke="#444" stroke-width="0.7"/><path d="M2.6 3.2H5.6M4.4 1.8L5.8 3.2L4.4 4.6" fill="none" stroke="#444" stroke-width="0.6"/></svg>
<svg style="left:525.6px;top:79px;" width="10" height="9" viewBox="0 0 10 9"><path d="M0.6 6.2Q0.4 4.6 2.2 4.2L3 1.4Q4.6 0.2 5.8 1.4L6.4 3.8Q9 4.2 9.2 6.2Q7.6 8.4 4.8 8.4Q1.6 8.4 0.6 6.2Z" fill="#949494" stroke="#6e6e6e" stroke-width="0.6"/><path d="M1.6 6Q4.8 7.8 8.4 5.8M3 4.4Q4.6 5.2 6.4 4.2" fill="none" stroke="#6e6e6e" stroke-width="0.5"/></svg>
<span style="left:537.00px;top:79.90px;font-size:6.4px;line-height:8.00px;color:#333;letter-spacing:0.000px;transform:scaleX(0.9656);transform-origin:0 0;">L3600-F0050-A00.prt</span>
<svg style="left:599.3px;top:80.2px;" width="7" height="8" viewBox="0 0 7 8"><path d="M3.6 1H0.8V6.6H4.6V4.6" fill="none" stroke="#444" stroke-width="0.7"/><path d="M2.6 3.2H5.6M4.4 1.8L5.8 3.2L4.4 4.6" fill="none" stroke="#444" stroke-width="0.6"/></svg>
<div style="left:617px;top:77px;width:94.3px;height:13.6px;background:#0b5f88;"></div>
<svg style="left:619.8px;top:79px;" width="10" height="9" viewBox="0 0 10 9"><path d="M0.6 6.2Q0.4 4.6 2.2 4.2L3 1.4Q4.6 0.2 5.8 1.4L6.4 3.8Q9 4.2 9.2 6.2Q7.6 8.4 4.8 8.4Q1.6 8.4 0.6 6.2Z" fill="#8fb2c6" stroke="#c9d9e3" stroke-width="0.6"/><path d="M1.6 6Q4.8 7.8 8.4 5.8M3 4.4Q4.6 5.2 6.4 4.2" fill="none" stroke="#c9d9e3" stroke-width="0.5"/></svg>
<span style="left:631.50px;top:79.90px;font-size:6.4px;line-height:8.00px;color:#fff;letter-spacing:0.000px;transform:scaleX(0.9615);transform-origin:0 0;">L3600-F0051-A00.prt</span>
<svg style="left:693.6px;top:80.2px;" width="7" height="8" viewBox="0 0 7 8"><path d="M3.6 1H0.8V6.6H4.6V4.6" fill="none" stroke="#fff" stroke-width="0.7"/><path d="M2.6 3.2H5.6M4.4 1.8L5.8 3.2L4.4 4.6" fill="none" stroke="#fff" stroke-width="0.6"/></svg>
<svg style="left:702.3px;top:81.2px;" width="6" height="6" viewBox="0 0 6 6"><path d="M0.6 0.6L4.6 4.6M4.6 0.6L0.6 4.6" stroke="#fff" stroke-width="1.1"/></svg>
<svg style="left:713.8px;top:79px;" width="10" height="9" viewBox="0 0 10 9"><path d="M0.6 6.2Q0.4 4.6 2.2 4.2L3 1.4Q4.6 0.2 5.8 1.4L6.4 3.8Q9 4.2 9.2 6.2Q7.6 8.4 4.8 8.4Q1.6 8.4 0.6 6.2Z" fill="#949494" stroke="#6e6e6e" stroke-width="0.6"/><path d="M1.6 6Q4.8 7.8 8.4 5.8M3 4.4Q4.6 5.2 6.4 4.2" fill="none" stroke="#6e6e6e" stroke-width="0.5"/></svg>
<span style="left:725.00px;top:79.90px;font-size:6.4px;line-height:8.00px;color:#333;letter-spacing:0.004px;">L3600-A0202-00.prt</span>
<svg style="left:795.6px;top:78.6px;" width="11" height="10" viewBox="0 0 11 10"><rect x="1.4" y="0.8" width="4.4" height="3.6" fill="#e0243c"/><path d="M6 1H9.4V8.6H6" fill="none" stroke="#444" stroke-width="0.6"/><path d="M0.8 6.6Q0.8 4.6 3 4.6Q5.4 4.6 5.4 6.6Q5.4 8.6 3 8.6Q0.8 8.6 0.8 6.6Z" fill="#fff" stroke="#444" stroke-width="0.6"/><path d="M7 2.4H8.6M7 4H8.6M7 5.6H8.6" stroke="#666" stroke-width="0.5"/></svg>
<span style="left:807.50px;top:79.90px;font-size:6.4px;line-height:8.00px;color:#333;letter-spacing:0.000px;transform:scaleX(0.9932);transform-origin:0 0;">Discovery Center</span>
<div style="left:250.2px;top:397px;width:773.8px;height:0.6px;background:#efefef;"></div>
<div style="left:250.2px;top:400.6px;width:773.8px;height:0.9px;background:#d2d2d2;"></div>
<div style="left:250.2px;top:401.5px;width:773.8px;height:13.8px;background:#efefef;"></div>
<span style="left:264.40px;top:404.90px;font-size:6.4px;line-height:8.00px;color:#3a3a3a;letter-spacing:0.000px;transform:scaleX(0.9665);transform-origin:0 0;">Clearance Browser</span>
<svg style="left:1021.8px;top:407px;" width="4" height="3" viewBox="0 0 4 3"><path d="M0 0H3L1.5 1.8Z" fill="#333"/></svg>
<div style="left:250.1px;top:415.2px;width:773.9px;height:0.8px;background:#f4f4f4;"></div>
<div style="left:250.1px;top:415.9px;width:604.4px;height:10.6px;background:#ececec;"></div>
<div style="left:854.5px;top:415.9px;width:169.5px;height:10.6px;background:#ececec;"></div>
<div style="left:250.1px;top:426.75px;width:773.9px;height:10.94px;background:#fff;"></div>
<div style="left:250.1px;top:437.69px;width:773.9px;height:10.94px;background:#f9f9f9;"></div>
<div style="left:250.1px;top:448.63px;width:773.9px;height:10.94px;background:#fff;"></div>
<div style="left:250.1px;top:459.57px;width:773.9px;height:10.94px;background:#f9f9f9;"></div>
<div style="left:250.1px;top:470.51px;width:773.9px;height:10.94px;background:#fff;"></div>
<div style="left:250.1px;top:481.45px;width:773.9px;height:10.94px;background:#f9f9f9;"></div>
<div style="left:250.1px;top:492.39px;width:773.9px;height:10.94px;background:#fff;"></div>
<div style="left:250.1px;top:503.33px;width:773.9px;height:10.94px;background:#f9f9f9;"></div>
<div style="left:250.1px;top:514.27px;width:773.9px;height:10.94px;background:#fff;"></div>
<div style="left:250.1px;top:525.21px;width:773.9px;height:3.7899999999999636px;background:#f9f9f9;"></div>
<div style="left:291.2px;top:448.6px;width:563.3px;height:10.2px;background:#cfe5ec;"></div>
<div style="left:389.5px;top:415.9px;width:0.7px;height:113.1px;background:#e4e4e4;"></div>
<div style="left:526.2px;top:415.9px;width:0.7px;height:113.1px;background:#e4e4e4;"></div>
<div style="left:608.3px;top:415.9px;width:0.7px;height:113.1px;background:#e4e4e4;"></div>
<div style="left:649.4px;top:415.9px;width:0.7px;height:113.1px;background:#e4e4e4;"></div>
<div style="left:693.1px;top:415.9px;width:0.7px;height:113.1px;background:#e4e4e4;"></div>
<div style="left:715.8px;top:415.9px;width:0.7px;height:113.1px;background:#e4e4e4;"></div>
<div style="left:733.4px;top:415.9px;width:0.7px;height:113.1px;background:#e4e4e4;"></div>
<div style="left:751px;top:415.9px;width:0.7px;height:113.1px;background:#e4e4e4;"></div>
<div style="left:805.6px;top:415.9px;width:0.7px;height:113.1px;background:#e4e4e4;"></div>
<div style="left:854.5px;top:415.9px;width:0.7px;height:113.1px;background:#e4e4e4;"></div>
<span style="left:256.00px;top:417.94px;font-size:6.3px;line-height:8.00px;color:#3a3a3a;letter-spacing:0.098px;">Selected Component</span>
<span style="left:392.60px;top:417.94px;font-size:6.3px;line-height:8.00px;color:#3a3a3a;letter-spacing:0.186px;">Interfering Component</span>
<span style="left:529.40px;top:417.94px;font-size:6.3px;line-height:8.00px;color:#3a3a3a;letter-spacing:0.000px;transform:scaleX(0.9957);transform-origin:0 0;">Type</span>
<span style="left:612.20px;top:417.94px;font-size:6.3px;line-height:8.00px;color:#3a3a3a;letter-spacing:0.000px;transform:scaleX(0.9873);transform-origin:0 0;">Distance</span>
<span style="left:652.50px;top:417.94px;font-size:6.3px;line-height:8.00px;color:#3a3a3a;letter-spacing:0.023px;">Clearance</span>
<span style="left:696.30px;top:417.94px;font-size:6.3px;line-height:8.00px;color:#3a3a3a;letter-spacing:0.000px;transform:scaleX(0.7781);transform-origin:0 0;">Ide...</span>
<span style="left:719.70px;top:417.94px;font-size:6.3px;line-height:8.00px;color:#3a3a3a;letter-spacing:0.000px;transform:scaleX(0.9162);transform-origin:0 0;">O...</span>
<span style="left:737.30px;top:417.94px;font-size:6.3px;line-height:8.00px;color:#3a3a3a;letter-spacing:0.000px;transform:scaleX(0.9285);transform-origin:0 0;">U...</span>
<span style="left:754.90px;top:417.94px;font-size:6.3px;line-height:8.00px;color:#3a3a3a;letter-spacing:0.000px;transform:scaleX(0.9798);transform-origin:0 0;">Status</span>
<span style="left:809.50px;top:417.94px;font-size:6.3px;line-height:8.00px;color:#3a3a3a;letter-spacing:0.000px;transform:scaleX(0.9520);transform-origin:0 0;">Text</span>
<div style="left:257.6px;top:432px;width:0.5px;height:97px;background:#cfcfcf;"></div>
<div style="left:257.6px;top:432.22px;width:6px;height:0.5px;background:#cfcfcf;"></div>
<div style="left:268.6px;top:447px;width:0.5px;height:18px;background:#cfcfcf;"></div>
<div style="left:268.6px;top:454.1px;width:5px;height:0.5px;background:#cfcfcf;"></div>
<div style="left:268.6px;top:465.04px;width:5px;height:0.5px;background:#cfcfcf;"></div>
<div style="left:268.6px;top:491px;width:0.5px;height:29px;background:#cfcfcf;"></div>
<svg style="left:263.4px;top:427.82000000000005px;" width="8" height="8" viewBox="0 0 8 8"><circle cx="4" cy="4" r="3.65" fill="#1db31d"/></svg>
<span style="left:274.30px;top:427.94px;font-size:6.3px;line-height:8.00px;color:#333;letter-spacing:0.000px;transform:scaleX(0.9243);transform-origin:0 0;">Clearance Set: SET3</span>
<span style="left:392.60px;top:427.94px;font-size:6.3px;line-height:8.00px;color:#333;letter-spacing:0.000px;transform:scaleX(0.9351);transform-origin:0 0;">Version: 1</span>
<span style="left:651.30px;top:427.94px;font-size:6.3px;line-height:8.00px;color:#333;letter-spacing:0.000px;transform:scaleX(0.9400);transform-origin:0 0;">0.200000</span>
<svg style="left:255.29999999999998px;top:440.56px;" width="6" height="6" viewBox="0 0 6 6"><rect x="0.4" y="0.4" width="4.4" height="4.4" fill="#fff" stroke="#e4e4e4" stroke-width="0.4"/><path d="M1.2 2.6H4" stroke="#666" stroke-width="0.6"/></svg>
<svg style="left:262.6px;top:439.26000000000005px;" width="10" height="7" viewBox="0 0 10 7"><path d="M0.4 6.6V0.5H2.8L3.5 1.4H6.8V2.6M0.4 6.6L1.7 2.6H8.6L7.2 6.6Z" fill="#fff" stroke="#444" stroke-width="0.6"/></svg>
<span style="left:273.75px;top:438.94px;font-size:6.3px;line-height:8.00px;color:#333;letter-spacing:0.000px;transform:scaleX(0.9913);transform-origin:0 0;">Interferences</span>
<svg style="left:273.6px;top:450.20000000000005px;" width="9" height="8" viewBox="0 0 9 8"><rect x="0.5" y="0.5" width="7.6" height="6.8" fill="#fff" stroke="#3a3a3a" stroke-width="0.7"/></svg>
<svg style="left:282.9px;top:449.40000000000003px;" width="8" height="9" viewBox="0 0 8 9"><rect x="0.4" y="0.4" width="4.2" height="4.2" rx="0.6" fill="#fff" stroke="#333" stroke-width="0.65"/><rect x="2.5" y="4" width="4.2" height="4.4" rx="0.6" fill="#fff" stroke="#333" stroke-width="0.65"/><path d="M2.6 4.3H4.4" stroke="#f0902a" stroke-width="0.9"/></svg>
<span style="left:292.60px;top:449.94px;font-size:6.3px;line-height:8.00px;color:#333;letter-spacing:0.000px;transform:scaleX(0.9669);transform-origin:0 0;">L3600-D0158-A01 (131)</span>
<span style="left:392.60px;top:449.94px;font-size:6.3px;line-height:8.00px;color:#333;letter-spacing:0.000px;transform:scaleX(0.9526);transform-origin:0 0;">L3600-E0135-A00 (121)</span>
<span style="left:529.40px;top:449.94px;font-size:6.3px;line-height:8.00px;color:#333;letter-spacing:0.141px;">New (Touching)</span>
<span style="left:612.20px;top:449.94px;font-size:6.3px;line-height:8.00px;color:#333;letter-spacing:0.000px;transform:scaleX(0.8905);transform-origin:0 0;">0.000000</span>
<span style="left:651.30px;top:449.94px;font-size:6.3px;line-height:8.00px;color:#333;letter-spacing:0.000px;transform:scaleX(0.9400);transform-origin:0 0;">0.200000</span>
<span style="left:695.60px;top:449.94px;font-size:6.3px;line-height:8.00px;color:#333;letter-spacing:0.000px;">2</span>
<span style="left:753.70px;top:449.94px;font-size:6.3px;line-height:8.00px;color:#333;letter-spacing:0.157px;">Undetermined</span>
<svg style="left:273.6px;top:461.14000000000004px;" width="9" height="8" viewBox="0 0 9 8"><rect x="0.5" y="0.5" width="7.6" height="6.8" fill="#fff" stroke="#3a3a3a" stroke-width="0.7"/></svg>
<svg style="left:282.9px;top:460.34000000000003px;" width="8" height="9" viewBox="0 0 8 9"><rect x="0.4" y="0.4" width="4.2" height="4.2" rx="0.6" fill="#fff" stroke="#333" stroke-width="0.65"/><rect x="2.5" y="4" width="4.2" height="4.4" rx="0.6" fill="#fff" stroke="#333" stroke-width="0.65"/><path d="M2.6 4.3H4.4" stroke="#f0902a" stroke-width="0.9"/></svg>
<span style="left:292.60px;top:460.94px;font-size:6.3px;line-height:8.00px;color:#333;letter-spacing:0.000px;transform:scaleX(0.9669);transform-origin:0 0;">L3600-D0227-A01 (127)</span>
<span style="left:392.60px;top:460.94px;font-size:6.3px;line-height:8.00px;color:#333;letter-spacing:0.000px;transform:scaleX(0.9526);transform-origin:0 0;">L3600-E0135-A00 (121)</span>
<span style="left:529.40px;top:460.94px;font-size:6.3px;line-height:8.00px;color:#333;letter-spacing:0.141px;">New (Touching)</span>
<span style="left:612.20px;top:460.94px;font-size:6.3px;line-height:8.00px;color:#333;letter-spacing:0.000px;transform:scaleX(0.8905);transform-origin:0 0;">0.000000</span>
<span style="left:651.30px;top:460.94px;font-size:6.3px;line-height:8.00px;color:#333;letter-spacing:0.000px;transform:scaleX(0.9400);transform-origin:0 0;">0.200000</span>
<span style="left:695.60px;top:460.94px;font-size:6.3px;line-height:8.00px;color:#333;letter-spacing:0.000px;">1</span>
<span style="left:753.70px;top:460.94px;font-size:6.3px;line-height:8.00px;color:#333;letter-spacing:0.157px;">Undetermined</span>
<svg style="left:262.6px;top:472.08000000000004px;" width="10" height="7" viewBox="0 0 10 7"><path d="M0.4 6.6V0.5H2.8L3.5 1.4H6.8V2.6M0.4 6.6L1.7 2.6H8.6L7.2 6.6Z" fill="#fff" stroke="#444" stroke-width="0.6"/></svg>
<span style="left:273.75px;top:471.94px;font-size:6.3px;line-height:8.00px;color:#333;letter-spacing:0.000px;transform:scaleX(0.9912);transform-origin:0 0;">Exclusions</span>
<svg style="left:255.29999999999998px;top:484.32px;" width="6" height="6" viewBox="0 0 6 6"><rect x="0.4" y="0.4" width="4.4" height="4.4" fill="#fff" stroke="#e4e4e4" stroke-width="0.4"/><path d="M1.2 2.6H4" stroke="#666" stroke-width="0.6"/></svg>
<svg style="left:262.6px;top:483.02000000000004px;" width="10" height="7" viewBox="0 0 10 7"><path d="M0.4 6.6V0.5H2.8L3.5 1.4H6.8V2.6M0.4 6.6L1.7 2.6H8.6L7.2 6.6Z" fill="#fff" stroke="#444" stroke-width="0.6"/></svg>
<span style="left:273.75px;top:482.94px;font-size:6.3px;line-height:8.00px;color:#333;letter-spacing:0.110px;">Collection One</span>
<span style="left:275.00px;top:493.94px;font-size:6.3px;line-height:8.00px;color:#333;letter-spacing:0.000px;transform:scaleX(0.9669);transform-origin:0 0;">L3600-D0158-A01 (131)</span>
<span style="left:275.00px;top:504.94px;font-size:6.3px;line-height:8.00px;color:#333;letter-spacing:0.000px;transform:scaleX(0.9669);transform-origin:0 0;">L3600-D0227-A01 (127)</span>
<span style="left:275.00px;top:515.94px;font-size:6.3px;line-height:8.00px;color:#333;letter-spacing:0.000px;transform:scaleX(0.9615);transform-origin:0 0;">L3600-E0135-A00 (121)</span>
<svg style="left:262.6px;top:526.7800000000001px;" width="10" height="7" viewBox="0 0 10 7"><path d="M0.4 6.6V0.5H2.8L3.5 1.4H6.8V2.6M0.4 6.6L1.7 2.6H8.6L7.2 6.6Z" fill="#fff" stroke="#444" stroke-width="0.6"/></svg>
<span style="left:273.00px;top:527.94px;font-size:6.3px;line-height:8.00px;color:#333;letter-spacing:0.000px;transform:scaleX(0.9699);transform-origin:0 0;">Unit Subassemblies</span>
<svg style="left:253.3px;top:403.4px;" width="10" height="10" viewBox="0 0 10 10"><path d="M1 2.4L4 1.2L6.4 2.4V6.4L3.8 7.8L1 6.4Z" fill="#d63a3a" stroke="#7a1f1f" stroke-width="0.5"/><path d="M4.4 3.6L6.8 2.6L9 3.6V7.2L6.8 8.6L4.4 7.4Z" fill="#fff" stroke="#444" stroke-width="0.6"/></svg>
<svg style="left:380px;top:200px" width="240" height="195" viewBox="380 200 240 195"><defs>
<linearGradient id="gb" gradientUnits="userSpaceOnUse" x1="391" y1="0" x2="606" y2="0">
<stop offset="0" stop-color="#ae6d27"/><stop offset="0.165" stop-color="#bf7a31"/><stop offset="0.175" stop-color="#c98337"/><stop offset="0.36" stop-color="#e0913d"/><stop offset="0.47" stop-color="#f09b44"/><stop offset="0.6" stop-color="#e38f39"/><stop offset="1" stop-color="#e18e38"/></linearGradient>
<linearGradient id="gr" gradientUnits="userSpaceOnUse" x1="392" y1="0" x2="541" y2="0">
<stop offset="0" stop-color="#6762d1"/><stop offset="0.14" stop-color="#7670e8"/><stop offset="0.24" stop-color="#8e86fb"/><stop offset="0.275" stop-color="#a99eff"/><stop offset="0.45" stop-color="#9c90fd"/><stop offset="1" stop-color="#9d91fc"/></linearGradient>
<linearGradient id="gs" gradientUnits="userSpaceOnUse" x1="556" y1="0" x2="580" y2="0">
<stop offset="0" stop-color="#e8933a"/><stop offset="0.55" stop-color="#ffb245"/><stop offset="0.8" stop-color="#ffc259"/><stop offset="1" stop-color="#f3a03e"/></linearGradient>
<linearGradient id="gc" gradientUnits="userSpaceOnUse" x1="530" y1="225" x2="590" y2="275">
<stop offset="0" stop-color="#1fa4da"/><stop offset="0.45" stop-color="#28b0e6"/><stop offset="0.7" stop-color="#34c2f4"/><stop offset="1" stop-color="#36c5f6"/></linearGradient>
</defs><path d="M392.6 278 L392.1 324 C391.9 327.8 390.6 341.3 390.9 346.5 C391.2 351.7 392.0 352.3 394.0 355.2 C396.0 358.2 399.2 361.3 402.8 364.0 C406.3 366.7 411.1 369.4 415.2 371.5 C419.4 373.6 423.6 375.0 427.8 376.5 C431.9 378.0 436.1 379.3 440.2 380.2 C444.4 381.2 448.6 381.6 452.8 382.1 C456.9 382.6 461.1 382.9 465.2 383.0 C469.4 383.1 473.6 383.1 477.8 382.8 C481.9 382.4 487.2 381.3 490.2 380.9 C493.3 380.5 493.0 380.9 496.0 380.2 C499.0 379.6 504.3 378.6 508.5 377.1 C512.7 375.6 516.8 373.9 521.0 371.5 C525.2 369.1 529.3 365.8 533.5 362.8 C537.7 359.7 541.8 356.5 546.0 353.4 C550.2 350.3 554.3 347.1 558.5 344.0 C562.7 340.9 566.8 337.6 571.0 334.6 C575.2 331.6 579.3 328.9 583.5 325.9 C587.7 322.9 592.7 319.9 596.0 316.5 C599.3 313.1 601.8 309.2 603.5 305.2 C605.2 301.3 605.7 297.0 606.0 292.8 C606.3 288.5 605.4 284.0 605.2 280.0 C605.0 276.0 604.8 270.8 604.8 269.0 L604 262 L596 254 L560 238 L530 226 L506 216 L490 216 L476 225.5 L434 238 L409 257 L396 272Z" fill="url(#gb)"/><path d="M390.9 346.5 C391.4 348.0 392.0 352.3 394.0 355.2 C396.0 358.2 399.2 361.3 402.8 364.0 C406.3 366.7 411.1 369.4 415.2 371.5 C419.4 373.6 423.6 375.0 427.8 376.5 C431.9 378.0 436.1 379.3 440.2 380.2 C444.4 381.2 448.6 381.6 452.8 382.1 C456.9 382.6 461.1 382.9 465.2 383.0 C469.4 383.1 473.6 383.1 477.8 382.8 C481.9 382.4 487.2 381.3 490.2 380.9 C493.3 380.5 493.0 380.9 496.0 380.2 C499.0 379.6 504.3 378.6 508.5 377.1 C512.7 375.6 516.8 373.9 521.0 371.5 C525.2 369.1 529.3 365.8 533.5 362.8 C537.7 359.7 541.8 356.5 546.0 353.4 C550.2 350.3 554.3 347.1 558.5 344.0 C562.7 340.9 566.8 337.6 571.0 334.6 C575.2 331.6 581.4 327.3 583.5 325.9" fill="none" stroke="#ffa43c" stroke-width="2.2" stroke-linecap="round"/><path d="M392.3 290 L391.6 346" stroke="#ffa43c" stroke-width="0.9" fill="none"/><path d="M427.2 324 V375.6M512.1 314 V374.8" stroke="#ffa640" stroke-width="0.9" fill="none"/><ellipse cx="403.1" cy="329.2" rx="2.9" ry="4.4" fill="#a07c7c" stroke="#ffab4a" stroke-width="1.5" transform="rotate(-12 403.1 329.2)"/><ellipse cx="403.1" cy="329.2" rx="2.7" ry="4.2" fill="none" stroke="#3a2c2c" stroke-width="0.7" transform="rotate(-12 403.1 329.2)"/><ellipse cx="458.7" cy="345.8" rx="4.6" ry="4.6" fill="#a98585" stroke="#ffab4a" stroke-width="1.6"/><ellipse cx="458.7" cy="345.8" rx="4.2" ry="4.2" fill="none" stroke="#3a2c2c" stroke-width="0.8"/><path d="M518.5 232.7 L527 234 L534 238.5 L538.5 244.4 L543 253.3 L549 260.7 L556 268 L565 274 L571 278.4 L571 286 L547 296 L534 290 L541 264 L537 254 L531 245Z" fill="#f9a03f"/><path d="M520 233 L527 234.3 L533.5 238.8 L538 245 L541 252 L541.5 262 L538 252 L531 243.5Z" fill="#ffad4b"/><path d="M547 264 L560 272.5 L571 279.5 L570.5 287 L545.5 296.5 L546.5 290 L552 276Z" fill="#ffaa47"/><path d="M546 296.6 L568.8 287.1 L578.3 283.9 L578.9 296.1 Q578.5 302 576.2 306.7 Q572.5 313 567.7 318.3 Q562 324 557.2 326.8 Q553 329 549.8 328.9 Q547 328 546.6 325.7Z" fill="#e5943b" stroke="#f9ad52" stroke-width="0.9"/><path d="M568.8 287.1 L578.3 283.9 L578.9 296.1 Q578 303 576.2 306.7 Q572 314 567.7 318.3 L561.5 323 Q568.5 310 567.7 297.2Z" fill="url(#gs)"/><path d="M571 286.8 L577.8 284.6 V293.2Z" fill="#d18a3d" stroke="#f7b055" stroke-width="0.5"/><path d="M546.6 318 L547 325.7 Q548 328.6 551 328.4 Q556 327.4 561.5 323 L566 317 L563.5 312 L558 321.5 L551 316Z" fill="#ffae48"/><path d="M547.4 322.5 Q552 326 558.5 322.4 M549 326.6 Q554 327.4 560 322.8" stroke="#e8933a" stroke-width="0.6" fill="none"/><path d="M564.6 302.5 Q562 308 557.6 308" stroke="#f9ad52" stroke-width="0.6" fill="none"/><ellipse cx="559.4" cy="298.6" rx="1.1" ry="2.3" fill="#f3a244" stroke="#ffc066" stroke-width="0.4"/><path d="M550.3 313.6 L557.2 307.7 L565.1 312.5 L564.6 316.7 L557.7 322 L550.9 316.2Z" fill="#3b4843"/><path d="M550.3 313.6 L557.2 307.7 L565.1 312.5 L558.5 318.5Z" fill="#86a497" stroke="#4d6259" stroke-width="0.5"/><path d="M550.3 313.6 L558.5 318.5 L557.7 322 L550.9 316.2Z" fill="#6b8579"/><path d="M552.8 313.4 L557.2 309.8 L561.8 312.6 L557.8 316.2Z" fill="#a9c8ba"/><path d="M555 311.6 L559.8 314.4M554.6 314.6 L559.4 311" stroke="#5a766a" stroke-width="0.4"/><circle cx="550.2" cy="314.2" r="0.5" fill="#d02020"/><path d="M530.6 220.4 C531.1 220.2 532.4 219.2 533.5 219.3 C534.6 219.4 536.0 220.1 537.2 220.9 C538.5 221.7 539.5 222.8 541.0 224.0 C542.5 225.2 544.1 227.2 546.0 228.4 C547.9 229.6 549.8 230.3 552.2 230.9 C554.8 231.5 558.3 231.6 561.0 232.1 C563.7 232.6 565.8 233.0 568.5 233.8 C571.2 234.5 574.8 235.8 577.2 236.8 C579.8 237.7 581.2 238.4 583.5 239.6 C585.8 240.8 588.7 242.5 591.0 244.0 C593.3 245.5 595.6 247.1 597.2 248.4 C598.9 249.8 599.9 250.5 601.0 252.1 C602.1 253.7 603.5 256.2 604.1 257.8 C604.7 259.3 604.7 260.3 604.8 261.5 C604.9 262.7 604.9 264.5 604.9 265.1 L604.9 269.2 L571 284.3 C571.0 283.3 572.0 280.1 571.0 278.4 C570.0 276.7 567.6 275.6 565.1 273.9 C562.6 272.2 558.9 270.2 556.2 268.0 C553.5 265.8 551.1 263.1 548.9 260.7 C546.7 258.2 544.7 256.0 543.0 253.3 C541.3 250.6 540.0 246.9 538.5 244.4 C537.0 241.9 536.1 240.2 534.1 238.5 C532.1 236.8 529.3 235.1 526.7 234.1 C524.1 233.1 519.9 233.0 518.5 232.8 L520.6 231.6 L527.5 221.6Z" fill="url(#gc)"/><path d="M604.2 262.9 C602.6 263.9 598.2 267.0 594.6 268.8 C591.0 270.6 586.7 272.3 582.8 273.9 C578.9 275.5 573.0 277.6 571.0 278.4 L571 284.3 L604.9 269.2 L604.9 265.1Z" fill="#1d9fd4"/><path d="M604.2 262.9 C602.6 263.9 598.2 267.0 594.6 268.8 C591.0 270.6 586.7 272.3 582.8 273.9 C578.9 275.5 573.0 277.6 571.0 278.4" fill="none" stroke="#0f6388" stroke-width="0.5"/><path d="M604.9 265.1 L604.9 269.2 L571 284.3" fill="none" stroke="#1587b5" stroke-width="0.5"/><path d="M586.5 271.8 V277.3" stroke="#0f6388" stroke-width="0.5"/><path d="M554 232.2 Q562 231.5 570 233.6 Q578 236.5 582.7 240.6 Q587.5 245 587.6 249 Q587.5 253 584.1 256 Q578 260.5 570.2 263 Q563 265.8 557.6 267.8 L549 260 L545 254.6 L554 253Z" fill="#25a9e0" opacity="0.8"/><path d="M536.5 220.6 L541 224 L546.4 227.3 L554 253.2 L556.5 262 L551 263.5 L545 254.6 L538 229.4 L533.6 222Z" fill="#43bdec" opacity="0.9"/><path d="M546.4 227.3 L554 232.2 L565.25 249 L557 258.4 L554 253.2Z" fill="#1a93c9" opacity="0.9"/><path d="M530.6 220.4 C531.1 220.2 532.4 219.2 533.5 219.3 C534.6 219.4 536.0 220.1 537.2 220.9 C538.5 221.7 539.5 222.8 541.0 224.0 C542.5 225.2 544.1 227.2 546.0 228.4 C547.9 229.6 549.8 230.3 552.2 230.9 C554.8 231.5 558.3 231.6 561.0 232.1 C563.7 232.6 565.8 233.0 568.5 233.8 C571.2 234.5 574.8 235.8 577.2 236.8 C579.8 237.7 581.2 238.4 583.5 239.6 C585.8 240.8 588.7 242.5 591.0 244.0 C593.3 245.5 595.6 247.1 597.2 248.4 C598.9 249.8 599.9 250.5 601.0 252.1 C602.1 253.7 603.5 256.2 604.1 257.8 C604.7 259.3 604.7 260.3 604.8 261.5 C604.9 262.7 604.9 264.5 604.9 265.1" stroke="#0f6388" stroke-width="0.5" fill="none" opacity="0.8"/><path d="M548 229.8 Q562 233 576 238.6 Q589 245.4 596.5 253 Q600.5 258 601.6 263.6" stroke="#0e5e82" stroke-width="0.45" fill="none" opacity="0.6"/><path d="M554 232.2 Q562 231.5 570 233.6 Q578 236.5 582.7 240.6 Q587.5 245 587.6 249 Q587.5 253 584.1 256 Q578 260.5 570.2 263 Q563 265.8 557.6 267.8" stroke="#0e5e82" stroke-width="0.45" fill="none"/><path d="M559 237 Q568 238 577 242 Q580.5 245.5 579.2 249 Q576 252.5 571.5 254.6 Q565 256.6 559 257.4" stroke="#0e5e82" stroke-width="0.45" fill="none"/><path d="M563 241 Q570 242 573.5 245.5 Q574 249 569 251.4 L563.8 249.8 M565.25 249 L569 251.4 L571.5 254.6 M573.5 245.5 L577 242 M569 251.4 L565 256.6 M554 253.2 L563.8 249.8 M552 246.4 L560 243.4 M557 258.4 L559 257.4 M549 260 L556.5 262 L557.6 267.8 M579.2 249 L587.6 249" stroke="#0e5e82" stroke-width="0.45" fill="none"/><path d="M546.4 227.3 L554 253.2 L556.5 262 M538 229.4 L545 254.6 L551 263.5 M554 232.2 L565.25 249" stroke="#0e5e82" stroke-width="0.45" fill="none" opacity="0.7"/><path d="M522 226 L531 229.5 L537.5 222 M526 230.4 L533.5 233.5 L540 225.6 M531 229.5 L529 233 M533.5 233.5 L538.5 244.4 M536.4 231 L540 235 M540 235 L543 245 M538.5 244.4 L543 242.6 M543 253.3 L547 251.6" stroke="#0e5e82" stroke-width="0.45" fill="none"/><path d="M554 235 L565.25 249 L563.6 250Z" fill="#9fe2fa" stroke="#0e5e82" stroke-width="0.3"/><path d="M489.0 225.2 C486.5 225.1 479.0 224.3 474.0 224.6 C469.0 224.9 463.6 226.2 459.0 227.1 C454.4 228.0 450.7 228.9 446.5 230.2 C442.3 231.6 438.2 233.2 434.0 235.2 C429.8 237.3 425.7 239.6 421.5 242.8 C417.3 245.9 412.5 250.5 409.0 254.0 C405.5 257.5 402.8 260.3 400.4 263.6 C398.0 266.9 395.9 270.4 394.6 273.6 C393.3 276.8 392.6 279.1 392.8 282.8 C392.9 286.4 393.6 291.3 395.2 295.2 C396.9 299.2 399.4 303.0 402.8 306.5 C406.1 310.0 411.1 313.9 415.2 316.5 C419.4 319.1 423.6 320.6 427.8 322.1 C431.9 323.6 436.1 324.5 440.2 325.2 C444.4 326.0 448.6 326.5 452.8 326.5 C456.9 326.5 461.1 325.9 465.2 325.2 C469.4 324.6 473.6 323.8 477.8 322.8 C481.9 321.7 487.2 319.9 490.2 319.0 C493.3 318.1 493.9 318.0 496.0 317.2 C498.1 316.4 500.5 315.3 502.8 314.2 C505.0 313.1 507.1 312.1 509.5 310.6 C511.9 309.1 514.3 307.6 517.2 305.2 C520.2 302.9 524.3 299.6 527.2 296.5 C530.2 293.4 532.8 290.0 534.8 286.5 C536.7 283.0 538.1 279.0 539.1 275.2 C540.1 271.5 540.6 266.7 540.8 264.0 C540.9 261.3 540.6 260.7 540.0 259.0 C539.4 257.3 538.8 256.3 537.2 254.0 C535.8 251.7 533.0 247.8 531.0 245.2 C529.0 242.7 527.1 240.6 525.0 238.5 C522.9 236.4 519.6 233.7 518.5 232.8 L508.5 236.3 L484.4 230.1Z" fill="#807bfc"/><path d="M489.0 225.2 C486.5 225.1 479.0 224.3 474.0 224.6 C469.0 224.9 463.6 226.2 459.0 227.1 C454.4 228.0 450.7 228.9 446.5 230.2 C442.3 231.6 438.2 233.2 434.0 235.2 C429.8 237.3 425.7 239.6 421.5 242.8 C417.3 245.9 412.5 250.5 409.0 254.0 C405.5 257.5 402.8 260.3 400.4 263.6 C398.0 266.9 395.9 270.4 394.6 273.6 C393.3 276.8 392.6 279.1 392.8 282.8 C392.9 286.4 393.6 291.3 395.2 295.2 C396.9 299.2 399.4 303.0 402.8 306.5 C406.1 310.0 411.1 313.9 415.2 316.5 C419.4 319.1 423.6 320.6 427.8 322.1 C431.9 323.6 436.1 324.5 440.2 325.2 C444.4 326.0 448.6 326.5 452.8 326.5 C456.9 326.5 461.1 325.9 465.2 325.2 C469.4 324.6 473.6 323.8 477.8 322.8 C481.9 321.7 487.2 319.9 490.2 319.0 C493.3 318.1 493.9 318.0 496.0 317.2 C498.1 316.4 500.5 315.3 502.8 314.2 C505.0 313.1 507.1 312.1 509.5 310.6 C511.9 309.1 514.3 307.6 517.2 305.2 C520.2 302.9 524.3 299.6 527.2 296.5 C530.2 293.4 532.8 290.0 534.8 286.5 C536.7 283.0 538.1 279.0 539.1 275.2 C540.1 271.5 540.6 266.7 540.8 264.0 C540.9 261.3 540.6 260.7 540.0 259.0 C539.4 257.3 538.8 256.3 537.2 254.0 C535.8 251.7 533.0 247.8 531.0 245.2 C529.0 242.7 527.1 240.6 525.0 238.5 C522.9 236.4 519.6 233.7 518.5 232.8 L508.5 236.25 C509.5 237.5 512.8 241.0 514.8 244.0 C516.7 247.0 519.1 251.5 520.4 254.0 C521.7 256.5 521.9 257.3 522.3 259.0 C522.6 260.7 522.8 261.5 522.5 264.0 C522.2 266.5 521.7 270.7 520.4 274.0 C519.1 277.3 517.1 280.8 514.8 284.0 C512.4 287.2 509.0 290.5 506.0 293.0 C503.0 295.5 500.2 297.0 496.5 299.0 C492.8 301.0 488.2 303.5 484.0 305.2 C479.8 307.0 475.7 308.6 471.5 309.6 C467.3 310.6 463.2 311.3 459.0 311.5 C454.8 311.7 450.9 311.5 446.5 310.9 C442.1 310.3 437.1 309.3 432.8 307.8 C428.4 306.2 423.8 304.0 420.2 301.5 C416.7 299.0 413.7 295.9 411.5 292.8 C409.3 289.6 407.9 285.9 407.1 282.8 C406.3 279.6 406.1 277.1 406.5 274.0 C406.9 270.9 408.3 266.9 409.8 264.0 C411.3 261.1 412.3 259.8 415.2 256.5 C418.2 253.2 423.6 247.2 427.8 244.0 C431.9 240.8 436.1 238.9 440.2 237.1 C444.4 235.3 448.6 234.0 452.8 233.0 C456.9 232.0 461.1 231.4 465.2 230.9 C469.4 230.4 474.6 230.1 477.8 230.0 C480.9 229.9 483.3 230.1 484.4 230.1Z" fill="url(#gr)"/><path d="M489.0 225.2 C486.5 225.1 479.0 224.3 474.0 224.6 C469.0 224.9 463.6 226.2 459.0 227.1 C454.4 228.0 450.7 228.9 446.5 230.2 C442.3 231.6 438.2 233.2 434.0 235.2 C429.8 237.3 425.7 239.6 421.5 242.8 C417.3 245.9 412.5 250.5 409.0 254.0 C405.5 257.5 402.8 260.3 400.4 263.6 C398.0 266.9 395.6 271.9 394.6 273.6 L406.5 274 C407.1 272.3 408.3 266.9 409.8 264.0 C411.3 261.1 412.3 259.8 415.2 256.5 C418.2 253.2 423.6 247.2 427.8 244.0 C431.9 240.8 436.1 238.9 440.2 237.1 C444.4 235.3 448.6 234.0 452.8 233.0 C456.9 232.0 461.1 231.4 465.2 230.9 C469.4 230.4 474.6 230.1 477.8 230.0 C480.9 229.9 483.3 230.1 484.4 230.1Z" fill="#716bd9"/><path d="M484.4 230.1 C483.3 230.1 480.9 229.9 477.8 230.0 C474.6 230.1 469.4 230.4 465.2 230.9 C461.1 231.4 456.9 232.0 452.8 233.0 C448.6 234.0 444.4 235.3 440.2 237.1 C436.1 238.9 431.9 240.8 427.8 244.0 C423.6 247.2 418.2 253.2 415.2 256.5 C412.3 259.8 411.3 261.1 409.8 264.0 C408.3 266.9 406.9 270.9 406.5 274.0 C406.1 277.1 406.3 279.6 407.1 282.8 C407.9 285.9 409.3 289.6 411.5 292.8 C413.7 295.9 416.7 299.0 420.2 301.5 C423.8 304.0 428.4 306.2 432.8 307.8 C437.1 309.3 442.1 310.3 446.5 310.9 C450.9 311.5 454.8 311.7 459.0 311.5 C463.2 311.3 467.3 310.6 471.5 309.6 C475.7 308.6 479.8 307.0 484.0 305.2 C488.2 303.5 492.8 301.0 496.5 299.0 C500.2 297.0 503.0 295.5 506.0 293.0 C509.0 290.5 512.4 287.2 514.8 284.0 C517.1 280.8 519.1 277.3 520.4 274.0 C521.7 270.7 522.2 266.5 522.5 264.0 C522.8 261.5 522.6 260.7 522.3 259.0 C521.9 257.3 521.7 256.5 520.4 254.0 C519.1 251.5 516.7 247.0 514.8 244.0 C512.8 241.0 509.5 237.5 508.5 236.2Z" fill="#807bfc"/><path d="M484.4 230 L488.1 225.4 L492.5 222.9 L498.1 216.3 L506.25 211.6 L528.75 218.8 L530.6 220.4 L527.5 221.6 L520.6 231.6 L515 233.5 L509.4 237.25 L505.6 236.6Z" fill="#817cfc"/><path d="M498.1 216.3 L506.25 211.6 L528.75 218.8 L526.25 218.2 L517.5 222.6Z" fill="#8a85fb"/><path d="M517.5 222.6 L526.25 218.2 L529 218.9 L530.6 220.4 L527.5 221.6 L519.4 224.75Z" fill="#9089fd"/><path d="M519.4 224.75 L527.5 221.6 L520.6 231.6 L515 233.5Z" fill="#6c66d8"/><path d="M517.5 222.6 L519.4 224.75 L509.4 237.25 L505.6 236.6Z" fill="#8a84fc"/><path d="M474 224.4 L477.2 220.4 L480 220 L490 223.8 L488.1 225.6Z" fill="#ffa53f"/><path d="M479.3 219.8 L489.4 210.7 L506.25 211.6 L498.1 216.3 L492.5 222.9 L490 223.8Z" fill="#1ba6d6"/><path d="M482.5 216.4 L498.1 216.3 M486 213.4 L501 214.6 M487 216.6 L485.6 221.8 M493.4 216.6 L492.4 222.4" stroke="#0e5e82" stroke-width="0.4" fill="none"/><path d="M489.0 225.2 C486.5 225.1 479.0 224.3 474.0 224.6 C469.0 224.9 463.6 226.2 459.0 227.1 C454.4 228.0 450.7 228.9 446.5 230.2 C442.3 231.6 438.2 233.2 434.0 235.2 C429.8 237.3 425.7 239.6 421.5 242.8 C417.3 245.9 412.5 250.5 409.0 254.0 C405.5 257.5 402.8 260.3 400.4 263.6 C398.0 266.9 395.9 270.4 394.6 273.6 C393.3 276.8 393.1 281.2 392.8 282.8" stroke="#26264e" stroke-width="0.5" fill="none"/><path d="M392.8 282.8 C393.2 284.8 393.6 291.3 395.2 295.2 C396.9 299.2 399.4 303.0 402.8 306.5 C406.1 310.0 411.1 313.9 415.2 316.5 C419.4 319.1 423.6 320.6 427.8 322.1 C431.9 323.6 436.1 324.5 440.2 325.2 C444.4 326.0 448.6 326.5 452.8 326.5 C456.9 326.5 461.1 325.9 465.2 325.2 C469.4 324.6 473.6 323.8 477.8 322.8 C481.9 321.7 487.2 319.9 490.2 319.0 C493.3 318.1 493.9 318.0 496.0 317.2 C498.1 316.4 500.5 315.3 502.8 314.2 C505.0 313.1 507.1 312.1 509.5 310.6 C511.9 309.1 514.3 307.6 517.2 305.2 C520.2 302.9 524.3 299.6 527.2 296.5 C530.2 293.4 532.8 290.0 534.8 286.5 C536.7 283.0 538.1 279.0 539.1 275.2 C540.1 271.5 540.6 266.7 540.8 264.0 C540.9 261.3 540.6 260.7 540.0 259.0 C539.4 257.3 538.8 256.3 537.2 254.0 C535.8 251.7 533.0 247.8 531.0 245.2 C529.0 242.7 527.1 240.6 525.0 238.5 C522.9 236.4 519.6 233.7 518.5 232.8" stroke="#3c3a7a" stroke-width="0.45" fill="none"/><path d="M484.4 230.1 C483.3 230.1 480.9 229.9 477.8 230.0 C474.6 230.1 469.4 230.4 465.2 230.9 C461.1 231.4 456.9 232.0 452.8 233.0 C448.6 234.0 444.4 235.3 440.2 237.1 C436.1 238.9 431.9 240.8 427.8 244.0 C423.6 247.2 418.2 253.2 415.2 256.5 C412.3 259.8 411.3 261.1 409.8 264.0 C408.3 266.9 406.9 270.9 406.5 274.0 C406.1 277.1 406.3 279.6 407.1 282.8 C407.9 285.9 409.3 289.6 411.5 292.8 C413.7 295.9 416.7 299.0 420.2 301.5 C423.8 304.0 428.4 306.2 432.8 307.8 C437.1 309.3 442.1 310.3 446.5 310.9 C450.9 311.5 454.8 311.7 459.0 311.5 C463.2 311.3 467.3 310.6 471.5 309.6 C475.7 308.6 479.8 307.0 484.0 305.2 C488.2 303.5 492.8 301.0 496.5 299.0 C500.2 297.0 503.0 295.5 506.0 293.0 C509.0 290.5 512.4 287.2 514.8 284.0 C517.1 280.8 519.1 277.3 520.4 274.0 C521.7 270.7 522.2 266.5 522.5 264.0 C522.8 261.5 522.6 260.7 522.3 259.0 C521.9 257.3 521.7 256.5 520.4 254.0 C519.1 251.5 516.7 247.0 514.8 244.0 C512.8 241.0 509.5 237.5 508.5 236.2" stroke="#26264e" stroke-width="0.5" fill="none"/><path d="M484.4 230 L488.1 225.4 L492.5 222.9 L498.1 216.3 L506.25 211.6 L528.75 218.8 L530.6 220.4 M498.1 216.3 L517.5 222.6 L526.25 218.2 M492.5 222.9 L511.9 229.1 M517.5 222.6 L505.6 236.6 L509.4 237.25 L519.4 224.75 L517.5 222.6 M519.4 224.75 L527.5 221.6 L520.6 231.6 L515 233.5 M489 225.25 L488.1 225.4" stroke="#26264e" stroke-width="0.5" fill="none"/><path d="M432.75 308.2 L427.9 320.8" stroke="#3c3a7a" stroke-width="0.45"/><path d="M395.2 295.2 C396.5 297.1 399.4 303.0 402.8 306.5 C406.1 310.0 411.1 313.9 415.2 316.5 C419.4 319.1 423.6 320.6 427.8 322.1 C431.9 323.6 436.1 324.5 440.2 325.2 C444.4 326.0 448.6 326.5 452.8 326.5 C456.9 326.5 461.1 325.9 465.2 325.2 C469.4 324.6 473.6 323.8 477.8 322.8 C481.9 321.7 487.2 319.9 490.2 319.0 C493.3 318.1 493.9 318.0 496.0 317.2 C498.1 316.4 500.5 315.3 502.8 314.2 C505.0 313.1 507.1 312.1 509.5 310.6 C511.9 309.1 514.3 307.6 517.2 305.2 C520.2 302.9 525.6 298.0 527.2 296.5" stroke="#b02848" stroke-width="0.7" fill="none" opacity="0.7" transform="translate(0,0.9)"/><path d="M392.8 282.8 C393.2 284.8 393.6 291.3 395.2 295.2 C396.9 299.2 399.4 303.0 402.8 306.5 C406.1 310.0 411.1 313.9 415.2 316.5 C419.4 319.1 423.6 320.6 427.8 322.1 C431.9 323.6 436.1 324.5 440.2 325.2 C444.4 326.0 448.6 326.5 452.8 326.5 C456.9 326.5 461.1 325.9 465.2 325.2 C469.4 324.6 473.6 323.8 477.8 322.8 C481.9 321.7 487.2 319.9 490.2 319.0 C493.3 318.1 493.9 318.0 496.0 317.2 C498.1 316.4 500.5 315.3 502.8 314.2 C505.0 313.1 507.1 312.1 509.5 310.6 C511.9 309.1 514.3 307.6 517.2 305.2 C520.2 302.9 524.3 299.6 527.2 296.5 C530.2 293.4 533.5 288.2 534.8 286.5" stroke="#2a2860" stroke-width="0.9" fill="none" opacity="0.85" transform="translate(0,0.25)"/><circle cx="458.7" cy="312.3" r="0.5" fill="#333"/></svg>
<svg style="left:0px;top:13px" width="480" height="49" viewBox="0 13 480 49"><defs>
<linearGradient id="gl" x1="0" y1="0" x2="1" y2="0"><stop offset="0" stop-color="#c9c9c9"/><stop offset="0.5" stop-color="#f2f2f2"/><stop offset="1" stop-color="#d2d2d2"/></linearGradient>
<linearGradient id="gd" x1="0" y1="0" x2="1" y2="0"><stop offset="0" stop-color="#d8d8d8"/><stop offset="1" stop-color="#9c9c9c"/></linearGradient>
<linearGradient id="go" x1="0" y1="0" x2="1" y2="1"><stop offset="0" stop-color="#f9a533"/><stop offset="1" stop-color="#ef8416"/></linearGradient>
<linearGradient id="go2" x1="0" y1="0" x2="0" y2="1"><stop offset="0" stop-color="#f7941e"/><stop offset="1" stop-color="#ecba7c"/></linearGradient>
<linearGradient id="gcy" x1="0" y1="0" x2="1" y2="0"><stop offset="0" stop-color="#f4f4f4"/><stop offset="0.6" stop-color="#e0e0e0"/><stop offset="1" stop-color="#a8a8a8"/></linearGradient>
</defs><path d="M-5 25.3 L4.1 20.2 L12.8 25.3 L4.1 30.6Z" fill="#f6c6d6" stroke="#e98bab" stroke-width="0.7"/><path d="M22 18.3V31.7H33.8M19 25.6Q23.5 18.6 34.7 17" fill="none" stroke="#4ec0dc" stroke-width="0.8"/><circle cx="28.1" cy="24.9" r="3.3" fill="none" stroke="#4ec0dc" stroke-width="0.8"/><path d="M25.1 34.3 L26.3 31.4 L34.2 23.3 L36.6 25.7 L28.4 33.5Z" fill="#f1c232" stroke="#6b5a2a" stroke-width="0.5"/><path d="M34.2 23.3 L35.3 22.3 Q36.6 22 37.3 23.2 Q37.7 24.4 36.6 25.7Z" fill="#dc4450" stroke="#7a3030" stroke-width="0.4"/><path d="M25.1 34.3 L26.3 31.4 L28.4 33.5Z" fill="#5a5a5a"/><path d="M27.4 32.4 L35.4 24.5" stroke="#c99a20" stroke-width="0.6"/><path d="M52.1 23 L56.75 25.8 V32.4 L52.1 28.9Z" fill="url(#gl)" stroke="#747474" stroke-width="0.7" stroke-linejoin="round"/><path d="M56.75 25.8 L60.8 23.6 V30 L56.75 32.4Z" fill="#b2b2b2" stroke="#747474" stroke-width="0.7" stroke-linejoin="round"/><path d="M60.8 23.6 L64.9 25.8 V32.4 L60.8 30Z" fill="#e8e8e8" stroke="#747474" stroke-width="0.7" stroke-linejoin="round"/><path d="M64.9 25.8 L69.6 23 V28.9 L64.9 32.4Z" fill="url(#gd)" stroke="#747474" stroke-width="0.7" stroke-linejoin="round"/><path d="M52.1 23 L60.5 18.3 L69.6 23 L64.9 25.8 L60.8 23.6 L56.75 25.8Z" fill="#eeeeee" stroke="#4ec0dc" stroke-width="0.8" stroke-linejoin="round"/><path d="M78 25.8 L85.2 17.1 L94.9 22.1 V25.5 Q93.8 31 88 34.3 L78.3 28.3Z" fill="url(#gl)" stroke="#747474" stroke-width="0.7" stroke-linejoin="round"/><path d="M94.9 22.1 V25.5 Q93.8 31 88 34.3 L87.6 31.4 Q92 27.6 93 23.2Z" fill="#aeaeae" stroke="#808080" stroke-width="0.5"/><path d="M78.3 28.3 L87.6 31.4 L88 34.3 L78.3 28.3" fill="#dadada" stroke="#747474" stroke-width="0.7" stroke-linejoin="round"/><path d="M82.6 20.2 L85.2 17.1 L94.9 22.1 L93.6 24.4 M78 20.6 L88 25.6 M81.6 18.9 L91.6 23.8 M88 25.6 Q90.5 25.6 91.6 23.8" fill="none" stroke="#4ec0dc" stroke-width="0.8"/><path d="M110.5 17.1 L118.8 22.4 V28.3 L110.5 33.6 L102.25 28.9 V23Z" fill="#e2e2e2" stroke="#747474" stroke-width="0.7" stroke-linejoin="round"/><path d="M102.25 23 L110.5 27.1 V33.6 L102.25 28.9Z" fill="url(#gl)"/><path d="M110.5 27.1 L118.8 22.4 V28.3 L110.5 33.6Z" fill="#b4b4b4"/><path d="M102.25 23 L110.5 27.1 L118.8 22.4 M110.5 27.1 V33.6" fill="none" stroke="#8c8c8c" stroke-width="0.5"/><path d="M107 22.1 V29.8 Q110.7 32.4 114.4 29.8 V22.1Z" fill="url(#go2)" opacity="0.9"/><ellipse cx="110.7" cy="22.1" rx="3.75" ry="2.1" fill="#f7931e"/><ellipse cx="110.2" cy="21.6" rx="2.2" ry="1.1" fill="#fbab47" opacity="0.7"/><path d="M126 22.6 Q126 19.4 131 19.2 Q133 16.8 137.9 16.8 Q142.8 16.8 142.8 19.6 V27 Q142.8 29.4 138.4 30 Q137.6 33.6 131.6 33.6 Q126 33.6 126 30.4Z" fill="url(#gcy)" stroke="#747474" stroke-width="0.7" stroke-linejoin="round"/><path d="M126 22.6 Q126 19.4 131 19.2 Q133 16.8 137.9 16.8 Q142.8 16.8 142.8 19.6 Q142.8 22 138.4 22.6 Q137.6 26.2 131.6 26.2 Q126 26.2 126 22.6Z" fill="#e6e6e6" stroke="#747474" stroke-width="0.7" stroke-linejoin="round"/><path d="M138.4 22.6 V30" stroke="#9a9a9a" stroke-width="0.5"/><path d="M150.2 23.6 V31.1 Q150.2 34.5 156.2 34.5 Q162.2 34.5 162.2 31.1 V23.6" fill="#fff" stroke="#cfcfcf" stroke-width="0.6"/><ellipse cx="156.2" cy="23.6" rx="6" ry="3.4" fill="#fff" stroke="#cfcfcf" stroke-width="0.6"/><path d="M155.6 19.3 Q155.6 16.5 161.2 16.5 Q166.9 16.5 166.9 19.3 V27.6 Q166.6 29.6 162.8 30.6 V22.4Z" fill="#e0e0e0" stroke="#747474" stroke-width="0.7" stroke-linejoin="round"/><path d="M163 22.4 Q166.9 21.6 166.9 19.3 V27.6 Q166.6 29.6 162.8 30.6Z" fill="#9b9b9b"/><path d="M155.25 19.9 Q158.6 19.2 160.6 20.3 Q162.6 21.2 163 22.4 L162.75 30.5 Q161.8 28.4 159.6 27.6 Q157.6 26.4 155.25 26.1Z" fill="url(#go)"/><path d="M150.2 31.1 Q153 28 156.2 27.7 Q160 27.8 162.2 29.8" fill="none" stroke="#d9c2a0" stroke-width="0.5"/><path d="M179.6 19.9 L184 17.1 L192.1 22.4 L187.75 24.25Z" fill="#d4d4d4" stroke="#747474" stroke-width="0.7" stroke-linejoin="round"/><path d="M187.75 24.25 L192.1 22.4 V28.6 L184 33.6 V30.5 Q184.4 26.6 187.75 24.25Z" fill="#a2a2a2" stroke="#747474" stroke-width="0.7" stroke-linejoin="round"/><path d="M175.9 26.4 L184 30.5 V33.6 L175.9 29.25Z" fill="#e6e6e6" stroke="#747474" stroke-width="0.7" stroke-linejoin="round"/><path d="M175.9 23.3 Q176.4 20.8 179.6 19.9 L187.75 24.25 Q184.4 26.6 184 30.5 L175.9 26.4Z" fill="url(#go)"/><path d="M210.4 17.1 L215.4 19.9 L207.3 24.9 L202.3 22.4Z" fill="#dedede" stroke="#747474" stroke-width="0.7" stroke-linejoin="round"/><path d="M202.3 22.4 L207.3 24.9 L210.4 30.2 V33.6 L202.3 28.9Z" fill="url(#gl)" stroke="#747474" stroke-width="0.7" stroke-linejoin="round"/><path d="M210.4 30.2 L218.6 25.5 L218.9 28.6 L210.4 33.6Z" fill="#b8b8b8" stroke="#747474" stroke-width="0.7" stroke-linejoin="round"/><path d="M207.3 24.9 L215.4 19.9 L218.6 25.5 L210.4 30.2Z" fill="url(#go)"/><path d="M235.4 17.1 L243.9 22.4 L237.9 25.2 L229.8 20.5Z" fill="#dedede" stroke="#747474" stroke-width="0.7" stroke-linejoin="round"/><path d="M237.9 25.2 L243.9 22.4 V28.6 L235.75 33.3Z" fill="url(#gd)" stroke="#747474" stroke-width="0.7" stroke-linejoin="round"/><path d="M229.8 20.5 L237.9 25.2 L235.75 33.3 L227.3 28.3Z" fill="url(#go)"/><path d="M257.5 17.1 L265.9 21.75 V29.25 L257.5 33.9 L248.75 29.25 V21.75Z" fill="#cbcbcb" stroke="#747474" stroke-width="0.7" stroke-linejoin="round"/><path d="M257.5 18.5 L264.7 22.5 V28.6 L257.5 32.6 L250 28.6 V22.5Z" fill="#ef8a1a"/><path d="M251.9 28.3 L258.1 25.5 L264.4 28.4 L257.5 32.4Z" fill="#fbb040"/><path d="M250 22.5 L257.5 18.5 L258.1 25.5 L251.9 28.3 L250 28.6Z" fill="#f39322"/><path d="M254.6 27 L260.8 30.4" stroke="#f7a030" stroke-width="0.4"/><path d="M272.2 23.8 L276.4 21.6 L281.2 23.6 L276.8 26.200000000000003Z" fill="#e4e4e4" stroke="#7c7c7c" stroke-width="0.55"/><path d="M272.2 23.8 L276.8 26.200000000000003 L281.2 23.6 V25.200000000000003 L276.8 27.8 L272.2 25.400000000000002Z" fill="#bdbdbd" stroke="#7c7c7c" stroke-width="0.55"/><path d="M274.9 18.6 V23.200000000000003 Q277.9 25.400000000000002 280.9 23.200000000000003 V18.6Z" fill="#f08a1c"/><ellipse cx="277.9" cy="18.6" rx="3.0" ry="1.4" fill="#f9a83a"/><path d="M274.9 21.200000000000003 Q277.9 23.200000000000003 280.9 21.200000000000003" fill="none" stroke="#d87810" stroke-width="0.4"/><circle cx="279.7" cy="24.6" r="1.75" fill="#fff" stroke="#2a2a2a" stroke-width="0.6"/><circle cx="283.4" cy="24.6" r="1.75" fill="#fff" stroke="#2a2a2a" stroke-width="0.6"/><circle cx="279.7" cy="28.3" r="1.75" fill="#fff" stroke="#2a2a2a" stroke-width="0.6"/><circle cx="283.4" cy="28.3" r="1.75" fill="#fff" stroke="#2a2a2a" stroke-width="0.6"/><path d="M272.1 41.6 L276.3 39.4 L281.1 41.4 L276.70000000000005 44.0Z" fill="#e4e4e4" stroke="#7c7c7c" stroke-width="0.55"/><path d="M272.1 41.6 L276.70000000000005 44.0 L281.1 41.4 V43.0 L276.70000000000005 45.6 L272.1 43.199999999999996Z" fill="#bdbdbd" stroke="#7c7c7c" stroke-width="0.55"/><path d="M275 37.2 V41.800000000000004 Q278.0 44.00000000000001 281 41.800000000000004 V37.2Z" fill="#f08a1c"/><ellipse cx="278.0" cy="37.2" rx="3.0" ry="1.4" fill="#f9a83a"/><path d="M275 39.800000000000004 Q278.0 41.800000000000004 281 39.800000000000004" fill="none" stroke="#d87810" stroke-width="0.4"/><path d="M276.2 48.75 L279.6 41.9 L279.9 48.75Z M282.1 41.9 L285.25 48.75 H281.8Z" fill="#fff" stroke="#2a2a2a" stroke-width="0.7" stroke-linejoin="round"/><path d="M280.9 40.8V49" stroke="#2a2a2a" stroke-width="0.8"/><path d="M343.3 21.0 L350.4 24.900000000000002 V31.0 L343.3 27.1Z" fill="url(#gl)" stroke="#747474" stroke-width="0.7" stroke-linejoin="round"/><path d="M350.4 24.900000000000002 L358.09999999999997 20.8 V26.9 L350.4 31.0Z" fill="url(#gd)" stroke="#747474" stroke-width="0.7" stroke-linejoin="round"/><path d="M350.7 17.1 L358.09999999999997 20.8 L350.4 24.900000000000002 L343.3 21.0Z" fill="url(#go)"/><path d="M355.7 24 L357.6 26.4 H356.5 V28.4 H358.5 V27.3 L361 29.25 L358.5 31.2 V30.1 H356.5 V32.1 H357.6 L355.7 34.5 L353.8 32.1 H354.9 V30.1 H352.9 V31.2 L350.4 29.25 L352.9 27.3 V28.4 H354.9 V26.4 H353.8Z" fill="#fff" stroke="#333" stroke-width="0.55" stroke-linejoin="round"/><path d="M365.20000000000005 21.0 L372.3 24.900000000000002 V31.0 L365.20000000000005 27.1Z" fill="url(#gl)" stroke="#747474" stroke-width="0.7" stroke-linejoin="round"/><path d="M372.3 24.900000000000002 L380.0 20.8 V26.9 L372.3 31.0Z" fill="url(#gd)" stroke="#747474" stroke-width="0.7" stroke-linejoin="round"/><path d="M372.6 17.1 L380.0 20.8 L372.3 24.900000000000002 L365.20000000000005 21.0Z" fill="url(#go)"/><path d="M374.2 25.6 L375.4 24.6 L377.9 28.2 L381.4 24.8 L382.6 25.9 L379 29.7 L382.4 33.4 L381.2 34.5 L377.8 31 L374.6 34.4 L373.3 33.4 L376.7 29.6Z" fill="#a3a3a3" stroke="#555" stroke-width="0.5" stroke-linejoin="round"/><path d="M389.70000000000005 21.0 L396.8 24.900000000000002 V31.0 L389.70000000000005 27.1Z" fill="url(#gl)" stroke="#747474" stroke-width="0.7" stroke-linejoin="round"/><path d="M396.8 24.900000000000002 L404.5 20.8 V26.9 L396.8 31.0Z" fill="url(#gd)" stroke="#747474" stroke-width="0.7" stroke-linejoin="round"/><path d="M397.1 17.1 L404.5 20.8 L396.8 24.900000000000002 L389.70000000000005 21.0Z" fill="url(#go)"/><path d="M399.6 25.4 H404.4 V23.9 L407.75 26.4 L404.4 28.9 V27.4 H399.6Z" fill="#fff" stroke="#333" stroke-width="0.55" stroke-linejoin="round"/><path d="M404 29.8 H399.2 V28.3 L395.9 30.8 L399.2 33.3 V31.8 H404Z" fill="#fff" stroke="#333" stroke-width="0.55" stroke-linejoin="round"/><path d="M415.6 20.599999999999998 L421.0 23.799999999999997 V27.999999999999996 L415.6 24.799999999999997Z" fill="url(#gl)" stroke="#747474" stroke-width="0.7" stroke-linejoin="round"/><path d="M421.0 23.799999999999997 L427.0 20.4 V24.599999999999998 L421.0 27.999999999999996Z" fill="url(#gd)" stroke="#747474" stroke-width="0.7" stroke-linejoin="round"/><path d="M421.3 17.4 L427.0 20.4 L421.0 23.799999999999997 L415.6 20.599999999999998Z" fill="url(#go)"/><path d="M422.75 24.25 L427.6 23.2 L428.7 23.6 V29.6 L423.8 30.4 L422.75 30Z" fill="#fff" stroke="#333" stroke-width="0.55" stroke-linejoin="round"/><path d="M423.8 24.8 L428.7 23.6 M423.8 24.8 V30.4 M422.75 24.25 L423.8 24.8" stroke="#333" stroke-width="0.45" fill="none"/><path d="M418.6 37.2 L421.4 35.9 L426.75 38.75 L424.25 40.3Z" fill="#dcdcdc" stroke="#747474" stroke-width="0.7" stroke-linejoin="round"/><path d="M424.25 40.3 L426.75 38.75 V43 L422.6 47 L422.4 45Z" fill="#a8a8a8" stroke="#747474" stroke-width="0.7" stroke-linejoin="round"/><path d="M415.8 42.5 L422.4 45 L422.6 47 L416 44.4Z" fill="#e0e0e0" stroke="#747474" stroke-width="0.7" stroke-linejoin="round"/><path d="M415.8 40.3 Q416.4 38 418.6 37.2 L424.25 40.3 Q422.6 42 422.4 45 L415.8 42.5Z" fill="url(#go)"/><path d="M421.4 48.75 L425.8 41.6 L428.6 48.75Z" fill="#fff" stroke="#333" stroke-width="0.6" stroke-linejoin="round"/></svg>
<svg style="left:250px;top:320px;" width="80" height="75" viewBox="250 320 80 75"><path d="M291.8 338.4 L281.9 346.2 L296.1 350.5 L305.3 343.4Z M281.9 346.2 L281.5 360.4 L295.4 365.4 L305.6 358.3 L305.3 343.4 M296.1 350.5 L295.4 365.4" stroke="#8a8a8a" stroke-width="0.5" fill="none"/><path d="M281.9 348.4 L272 345.9" stroke="#2848e0" stroke-width="1.6"/><path d="M268.6 345 L273.4 344.4 L272.6 347.8Z" fill="#2848e0"/><path d="M305.3 343.6 L307.2 342.2" stroke="#e03838" stroke-width="1.6"/><path d="M309.8 340.4 L308.6 343.6 L306.2 341Z" fill="#e03838"/><path d="M294.2 365.4 V374" stroke="#1f6a2f" stroke-width="1.6"/><path d="M294.2 378.6 L292.4 373.6 H296Z" fill="#1f6a2f"/></svg>
<span style="left:262.20px;top:339.19px;font-size:7px;line-height:9.00px;color:#3858e8;letter-spacing:0.000px;">Z</span>
<span style="left:310.60px;top:334.90px;font-size:6.4px;line-height:8.00px;color:#e05858;letter-spacing:0.000px;">X</span>
<span style="left:292.20px;top:378.90px;font-size:6.4px;line-height:8.00px;color:#58a058;letter-spacing:0.000px;">Y</span>
<svg style="left:0px;top:76px;" width="8" height="453" viewBox="0 76 8 453"><path d="M0 83.6H2.4" stroke="#333" stroke-width="0.7" fill="none"/><path d="M0 100.6 L1.6 99.6 L2.6 100.6 V105.6 L1.4 107 L0 106.4" fill="#555" stroke="#333" stroke-width="0.5"/><path d="M0 122.6 L2 124.6 M5.2 123.4 V131.4 L1.4 127.6Z" stroke="#333" stroke-width="0.7" fill="none"/><path d="M0 152.6 L4.4 155.8 L0 159.4 M0 156 H1.6" stroke="#333" stroke-width="0.7" fill="none"/><path d="M0 174.2 Q2.4 174.6 2.8 179.6 L3.6 182.6 H0" stroke="#333" stroke-width="0.7" fill="none"/><path d="M0 196.4 H1.4 V197.4 H3.4 V206 H0" stroke="#333" stroke-width="0.7" fill="none"/><path d="M0 221.6 Q3.6 221.6 3.6 223.4 V228.6 Q3.6 230.4 0 230.4Z" fill="#e8e8e8" stroke="#555" stroke-width="0.6"/><path d="M1.2 225 L4.2 220.4 M2.8 220.6 L4.4 220.2 L4.6 222" stroke="#f08a1c" stroke-width="0.8" fill="none"/><rect x="-2" y="244.6" width="6.6" height="12.6" fill="#dfe9f2" stroke="#555" stroke-width="0.6"/><circle cx="0.4" cy="251.6" r="2.4" fill="#3f8fc8" stroke="#1b5a8a" stroke-width="0.5"/><path d="M-1 246.4H3" stroke="#666" stroke-width="0.6"/><circle cx="-0.6" cy="275" r="4.4" stroke="#333" stroke-width="0.7" fill="none"/><path d="M0 272.6V275.4H2" stroke="#333" stroke-width="0.5" fill="none"/><path d="M0 288.6 H3.6 V298.6 H0 M0 291 Q2.6 291.2 2.6 293.6 M0 294 L1.6 295.4 L0 296.8" stroke="#333" stroke-width="0.7" fill="none"/><path d="M0 321.6 L2.2 325.4 H0Z" fill="#222"/></svg>
<svg style="left:11px;top:79.4px;" width="7" height="9" viewBox="0 0 7 9"><path d="M1 2.4 L3.4 0.8 L5.6 1.8 V6 L3.2 7.8 L1 6.8Z" fill="#9a9a9a" stroke="#444" stroke-width="0.5"/><path d="M1 2.4 L3.2 3.4 L5.6 1.8 M3.2 3.4 V7.8 M1 4.6 L3.2 5.6 L5.6 4" fill="none" stroke="#444" stroke-width="0.45"/><path d="M0.4 3.6 H1.6 M0.4 5.6 H1.6" stroke="#444" stroke-width="0.5"/></svg>
<svg style="left:242.4px;top:64px;" width="8" height="11" viewBox="0 0 8 11"><path d="M1 2.4 Q4 0.6 6.6 2 M2 2.2 Q0.6 5.4 2.4 7.6 M4.6 1.2 L5.4 3.6" fill="none" stroke="#4ec0dc" stroke-width="0.7"/><circle cx="3.6" cy="4.6" r="1.6" fill="none" stroke="#4ec0dc" stroke-width="0.6"/><path d="M3 9.4 L3.6 7.8 L6.8 4.8 L7.8 5.8 L4.6 8.8Z" fill="#f1c232" stroke="#6b5a2a" stroke-width="0.4"/></svg>
</div></body></html>
